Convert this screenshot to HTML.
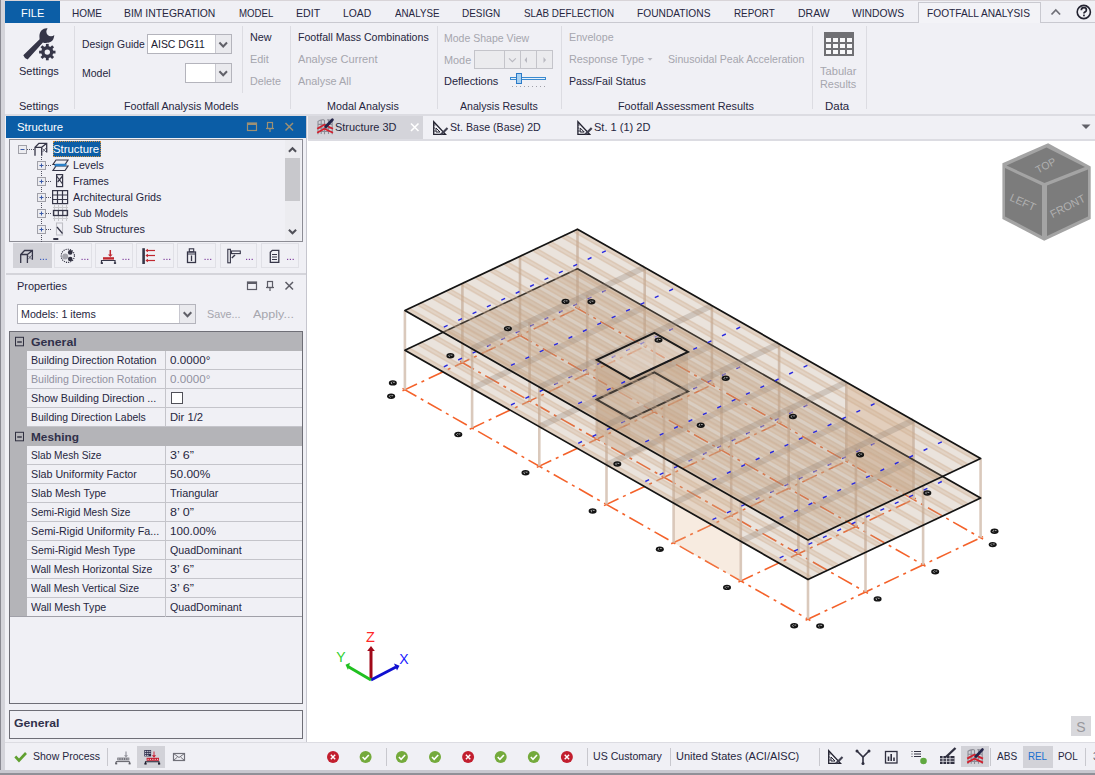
<!DOCTYPE html>
<html><head><meta charset="utf-8"><style>
html,body{margin:0;padding:0;width:1095px;height:775px;overflow:hidden;background:#f0f0f5}
.b{position:absolute}
.t{position:absolute;white-space:nowrap;font-family:"Liberation Sans", sans-serif;line-height:1;transform-origin:0 50%}
svg{position:absolute;left:0;top:0}
</style></head><body>
<div class=b style='left:0px;top:0px;width:1095px;height:775px;background:#f0f0f5'></div>
<div class=b style='left:0px;top:0px;width:1095px;height:1px;background:#d8d4d8'></div>
<div class=b style='left:0px;top:0px;width:1px;height:775px;background:#8a8a92'></div>
<div class=b style='left:1px;top:1px;width:4px;height:774px;background:#d4d4da'></div>
<div class=b style='left:0px;top:770px;width:1095px;height:5px;background:#c8c8d0'></div>
<div class=b style='left:0px;top:773px;width:1095px;height:2px;background:#909098'></div>
<div class=b style='left:5px;top:22px;width:1090px;height:1px;background:#c9c9d0'></div>
<div class=b style='left:5px;top:1px;width:55px;height:22px;background:#0c5ea6'></div>
<div class=b style='left:918px;top:2px;width:123px;height:21px;background:#f3f3f7;border:1px solid #c9c9d0;border-bottom:none;box-sizing:border-box'></div>
<div class=b style='left:74px;top:26px;width:1px;height:83px;background:#dcdce2'></div>
<div class=b style='left:242px;top:26px;width:1px;height:67px;background:#dcdce2'></div>
<div class=b style='left:290px;top:26px;width:1px;height:83px;background:#dcdce2'></div>
<div class=b style='left:437px;top:26px;width:1px;height:83px;background:#dcdce2'></div>
<div class=b style='left:561px;top:26px;width:1px;height:83px;background:#dcdce2'></div>
<div class=b style='left:812px;top:26px;width:1px;height:83px;background:#dcdce2'></div>
<div class=b style='left:866px;top:26px;width:1px;height:83px;background:#dcdce2'></div>
<div class=b style='left:5px;top:114px;width:1090px;height:2px;background:#dcdce2'></div>
<div class=b style='left:147px;top:34px;width:85px;height:20px;background:#fff;border:1px solid #b4b4bc;box-sizing:border-box'></div>
<div class=b style='left:215px;top:35px;width:15px;height:18px;background:#eaeaee;border-left:1px solid #c8c8d0'></div>
<div class=b style='left:185px;top:63px;width:47px;height:20px;background:#fff;border:1px solid #b4b4bc;box-sizing:border-box'></div>
<div class=b style='left:215px;top:64px;width:15px;height:18px;background:#eaeaee;border-left:1px solid #c8c8d0'></div>
<div class=b style='left:474px;top:50px;width:79px;height:19px;background:#ebebee;border:1px solid #c4c4ca;box-sizing:border-box'></div>
<div class=b style='left:504px;top:51px;width:1px;height:17px;background:#c4c4ca'></div>
<div class=b style='left:520px;top:51px;width:1px;height:17px;background:#c4c4ca'></div>
<div class=b style='left:536px;top:51px;width:1px;height:17px;background:#c4c4ca'></div>
<div class=b style='left:510px;top:77px;width:36px;height:3px;background:#e8f2fb;border:1px solid #3a8ad0;box-sizing:border-box'></div>
<div class=b style='left:516px;top:73px;width:6px;height:11px;background:#a8d0f0;border:1px solid #2a7ac8;box-sizing:border-box'></div>
<div class=b style='left:512px;top:86px;width:1px;height:1px;background:#a0a0a8'></div>
<div class=b style='left:516px;top:86px;width:1px;height:1px;background:#a0a0a8'></div>
<div class=b style='left:520px;top:86px;width:1px;height:1px;background:#a0a0a8'></div>
<div class=b style='left:524px;top:86px;width:1px;height:1px;background:#a0a0a8'></div>
<div class=b style='left:528px;top:86px;width:1px;height:1px;background:#a0a0a8'></div>
<div class=b style='left:532px;top:86px;width:1px;height:1px;background:#a0a0a8'></div>
<div class=b style='left:536px;top:86px;width:1px;height:1px;background:#a0a0a8'></div>
<div class=b style='left:540px;top:86px;width:1px;height:1px;background:#a0a0a8'></div>
<div class=b style='left:544px;top:86px;width:1px;height:1px;background:#a0a0a8'></div>
<div class=b style='left:824px;top:32px;width:30px;height:24px;background:#707074'></div>
<div class=b style='left:825.9px;top:37.9px;width:5.2000000000000455px;height:4.100000000000001px;background:#f8f8fa'></div>
<div class=b style='left:832.85px;top:37.9px;width:5.2000000000000455px;height:4.100000000000001px;background:#f8f8fa'></div>
<div class=b style='left:839.8px;top:37.9px;width:5.2000000000000455px;height:4.100000000000001px;background:#f8f8fa'></div>
<div class=b style='left:846.75px;top:37.9px;width:5.2000000000000455px;height:4.100000000000001px;background:#f8f8fa'></div>
<div class=b style='left:825.9px;top:43.9px;width:5.2000000000000455px;height:4.100000000000001px;background:#f8f8fa'></div>
<div class=b style='left:832.85px;top:43.9px;width:5.2000000000000455px;height:4.100000000000001px;background:#f8f8fa'></div>
<div class=b style='left:839.8px;top:43.9px;width:5.2000000000000455px;height:4.100000000000001px;background:#f8f8fa'></div>
<div class=b style='left:846.75px;top:43.9px;width:5.2000000000000455px;height:4.100000000000001px;background:#f8f8fa'></div>
<div class=b style='left:825.9px;top:49.9px;width:5.2000000000000455px;height:4.100000000000001px;background:#f8f8fa'></div>
<div class=b style='left:832.85px;top:49.9px;width:5.2000000000000455px;height:4.100000000000001px;background:#f8f8fa'></div>
<div class=b style='left:839.8px;top:49.9px;width:5.2000000000000455px;height:4.100000000000001px;background:#f8f8fa'></div>
<div class=b style='left:846.75px;top:49.9px;width:5.2000000000000455px;height:4.100000000000001px;background:#f8f8fa'></div>
<div class=b style='left:6px;top:116px;width:300px;height:22px;background:#0b5da6'></div>
<div class=b style='left:306px;top:116px;width:1px;height:626px;background:#c6c6ce'></div>
<div class=b style='left:9px;top:139px;width:294px;height:103px;background:#f0f0f5;border:1px solid #8c8c94;box-sizing:border-box'></div>
<div class=b style='left:285px;top:140px;width:16px;height:101px;background:#ececf0'></div>
<div class=b style='left:285px;top:158px;width:15px;height:43px;background:#c8c8cc'></div>
<div class=b style='left:53px;top:141px;width:48px;height:16px;background:#0c5ea6;outline:1px dotted #d09040;outline-offset:-1px'></div>
<div class=b style='left:13px;top:243px;width:39px;height:25px;background:#d2d2d8'></div>
<div class=b style='left:54px;top:243px;width:38px;height:25px;background:#f0f0f5;border:1px solid #e0e0e6;box-sizing:border-box'></div>
<div class=b style='left:95px;top:243px;width:38px;height:25px;background:#f0f0f5;border:1px solid #e0e0e6;box-sizing:border-box'></div>
<div class=b style='left:136px;top:243px;width:38px;height:25px;background:#f0f0f5;border:1px solid #e0e0e6;box-sizing:border-box'></div>
<div class=b style='left:177px;top:243px;width:39px;height:25px;background:#f0f0f5;border:1px solid #e0e0e6;box-sizing:border-box'></div>
<div class=b style='left:220px;top:243px;width:37px;height:25px;background:#f0f0f5;border:1px solid #e0e0e6;box-sizing:border-box'></div>
<div class=b style='left:261px;top:243px;width:38px;height:25px;background:#f0f0f5;border:1px solid #e0e0e6;box-sizing:border-box'></div>
<div class=b style='left:6px;top:273px;width:300px;height:2px;background:#d4d4da'></div>
<div class=b style='left:17px;top:304px;width:179px;height:20px;background:#fff;border:1px solid #b4b4bc;box-sizing:border-box'></div>
<div class=b style='left:179px;top:305px;width:15px;height:18px;background:#eaeaee;border-left:1px solid #c8c8d0'></div>
<div class=b style='left:9px;top:331px;width:294px;height:373px;background:#f0f0f5;border:1px solid #6e6e76;box-sizing:border-box'></div>
<div class=b style='left:10px;top:332px;width:292px;height:19px;background:#b4b4b8'></div>
<div class=b style='left:10px;top:427px;width:292px;height:19px;background:#b4b4b8'></div>
<div class=b style='left:10px;top:351px;width:17px;height:76px;background:#b4b4b8'></div>
<div class=b style='left:10px;top:446px;width:17px;height:171px;background:#b4b4b8'></div>
<div class=b style='left:27px;top:369px;width:275px;height:1px;background:#c4c4ca'></div>
<div class=b style='left:27px;top:388px;width:275px;height:1px;background:#c4c4ca'></div>
<div class=b style='left:27px;top:407px;width:275px;height:1px;background:#c4c4ca'></div>
<div class=b style='left:27px;top:426px;width:275px;height:1px;background:#c4c4ca'></div>
<div class=b style='left:27px;top:464px;width:275px;height:1px;background:#c4c4ca'></div>
<div class=b style='left:27px;top:483px;width:275px;height:1px;background:#c4c4ca'></div>
<div class=b style='left:27px;top:502px;width:275px;height:1px;background:#c4c4ca'></div>
<div class=b style='left:27px;top:521px;width:275px;height:1px;background:#c4c4ca'></div>
<div class=b style='left:27px;top:540px;width:275px;height:1px;background:#c4c4ca'></div>
<div class=b style='left:27px;top:559px;width:275px;height:1px;background:#c4c4ca'></div>
<div class=b style='left:27px;top:578px;width:275px;height:1px;background:#c4c4ca'></div>
<div class=b style='left:27px;top:597px;width:275px;height:1px;background:#c4c4ca'></div>
<div class=b style='left:27px;top:616px;width:275px;height:1px;background:#c4c4ca'></div>
<div class=b style='left:10px;top:616px;width:292px;height:1px;background:#a0a0a8'></div>
<div class=b style='left:165px;top:351px;width:1px;height:76px;background:#c4c4ca'></div>
<div class=b style='left:165px;top:446px;width:1px;height:171px;background:#c4c4ca'></div>
<div class=b style='left:171px;top:392px;width:12px;height:12px;background:#fff;border:1px solid #505058;box-sizing:border-box'></div>
<div class=b style='left:9px;top:710px;width:294px;height:29px;background:#f0f0f5;border:1px solid #6e6e76;box-sizing:border-box'></div>
<div class=b style='left:5px;top:742px;width:1090px;height:1px;background:#dcdce2'></div>
<div class=b style='left:308px;top:116px;width:787px;height:24px;background:#f0f0f5'></div>
<div class=b style='left:308px;top:116px;width:115px;height:24px;background:#d4d4da'></div>
<div class=b style='left:307px;top:140px;width:788px;height:602px;background:#ffffff'></div>
<div class=b style='left:308px;top:139px;width:787px;height:2px;background:#dcdce2'></div>
<div class=b style='left:1071px;top:716px;width:20px;height:20px;background:#d8d8dc'></div>
<div class=b style='left:137px;top:746px;width:28px;height:22px;background:#d2d2d8'></div>
<div class=b style='left:961px;top:746px;width:28px;height:21px;background:#d2d2d8'></div>
<div class=b style='left:1023px;top:746px;width:30px;height:22px;background:#d2d2d8'></div>
<div class=b style='left:107px;top:748px;width:1px;height:18px;background:#c8c8ce'></div>
<div class=b style='left:386px;top:748px;width:1px;height:18px;background:#c8c8ce'></div>
<div class=b style='left:587px;top:748px;width:1px;height:18px;background:#c8c8ce'></div>
<div class=b style='left:670px;top:748px;width:1px;height:18px;background:#c8c8ce'></div>
<div class=b style='left:819px;top:748px;width:1px;height:18px;background:#c8c8ce'></div>
<div class=b style='left:990px;top:748px;width:1px;height:18px;background:#c8c8ce'></div>
<div class=b style='left:1085px;top:748px;width:1px;height:18px;background:#c8c8ce'></div>
<svg width="1095" height="775" viewBox="0 0 1095 775">
<defs><clipPath id="vc"><rect x="308" y="140" width="787" height="602"/></clipPath></defs>
<g clip-path="url(#vc)">
<line x1="402.5" y1="388.4" x2="810.4" y2="620.5" style="stroke:#f4622a;stroke-width:1.6;stroke-dasharray:16 5 3 5;fill:none"/>
<line x1="460.0" y1="361.3" x2="868.0" y2="593.4" style="stroke:#f4622a;stroke-width:1.6;stroke-dasharray:16 5 3 5;fill:none"/>
<line x1="517.6" y1="334.1" x2="925.5" y2="566.2" style="stroke:#f4622a;stroke-width:1.6;stroke-dasharray:16 5 3 5;fill:none"/>
<line x1="575.1" y1="307.0" x2="983.1" y2="539.1" style="stroke:#f4622a;stroke-width:1.6;stroke-dasharray:16 5 3 5;fill:none"/>
<line x1="402.5" y1="390.9" x2="580.0" y2="307.2" style="stroke:#f4622a;stroke-width:1.6;stroke-dasharray:16 5 3 5;fill:none"/>
<line x1="469.7" y1="429.2" x2="647.2" y2="345.4" style="stroke:#f4622a;stroke-width:1.6;stroke-dasharray:16 5 3 5;fill:none"/>
<line x1="536.8" y1="467.4" x2="714.3" y2="383.7" style="stroke:#f4622a;stroke-width:1.6;stroke-dasharray:16 5 3 5;fill:none"/>
<line x1="604.0" y1="505.6" x2="781.5" y2="421.9" style="stroke:#f4622a;stroke-width:1.6;stroke-dasharray:16 5 3 5;fill:none"/>
<line x1="671.2" y1="543.8" x2="848.7" y2="460.1" style="stroke:#f4622a;stroke-width:1.6;stroke-dasharray:16 5 3 5;fill:none"/>
<line x1="738.4" y1="582.1" x2="915.9" y2="498.3" style="stroke:#f4622a;stroke-width:1.6;stroke-dasharray:16 5 3 5;fill:none"/>
<line x1="805.6" y1="620.3" x2="983.1" y2="536.6" style="stroke:#f4622a;stroke-width:1.6;stroke-dasharray:16 5 3 5;fill:none"/>
<polygon points="673.6,463.5 740.8,501.7 740.8,580.9 673.6,542.7" style="fill:rgba(228,182,145,0.28);stroke:none"/>
<polygon points="846.3,382.1 913.5,420.3 913.5,499.5 846.3,461.2" style="fill:rgba(228,182,145,0.4);stroke:none"/>
<polygon points="596.8,359.9 654.4,332.8 654.4,411.9 596.8,439.1" style="fill:rgba(200,158,122,0.22);stroke:none"/>
<polygon points="654.4,332.8 688.0,351.9 688.0,431.1 654.4,411.9" style="fill:rgba(200,158,122,0.22);stroke:none"/>
<polygon points="688.0,351.9 630.4,379.0 630.4,458.2 688.0,431.1" style="fill:rgba(200,158,122,0.22);stroke:none"/>
<polygon points="630.4,379.0 596.8,359.9 596.8,439.1 630.4,458.2" style="fill:rgba(200,158,122,0.36);stroke:none"/>
<line x1="404.9" y1="310.6" x2="404.9" y2="389.8" style="stroke:rgba(212,192,176,0.85);stroke-width:2.6"/>
<line x1="472.1" y1="348.8" x2="472.1" y2="428.0" style="stroke:rgba(212,192,176,0.85);stroke-width:2.6"/>
<line x1="539.3" y1="387.1" x2="539.3" y2="466.2" style="stroke:rgba(212,192,176,0.85);stroke-width:2.6"/>
<line x1="606.5" y1="425.3" x2="606.5" y2="504.5" style="stroke:rgba(212,192,176,0.85);stroke-width:2.6"/>
<line x1="673.6" y1="463.5" x2="673.6" y2="542.7" style="stroke:rgba(212,192,176,0.85);stroke-width:2.6"/>
<line x1="740.8" y1="501.7" x2="740.8" y2="580.9" style="stroke:rgba(212,192,176,0.85);stroke-width:2.6"/>
<line x1="808.0" y1="540.0" x2="808.0" y2="619.2" style="stroke:rgba(212,192,176,0.85);stroke-width:2.6"/>
<line x1="462.4" y1="283.5" x2="462.4" y2="362.7" style="stroke:rgba(212,192,176,0.85);stroke-width:2.6"/>
<line x1="529.6" y1="321.7" x2="529.6" y2="400.9" style="stroke:rgba(212,192,176,0.85);stroke-width:2.6"/>
<line x1="596.8" y1="359.9" x2="596.8" y2="439.1" style="stroke:rgba(212,192,176,0.85);stroke-width:2.6"/>
<line x1="664.0" y1="398.1" x2="664.0" y2="477.3" style="stroke:rgba(212,192,176,0.85);stroke-width:2.6"/>
<line x1="731.2" y1="436.4" x2="731.2" y2="515.6" style="stroke:rgba(212,192,176,0.85);stroke-width:2.6"/>
<line x1="798.4" y1="474.6" x2="798.4" y2="553.8" style="stroke:rgba(212,192,176,0.85);stroke-width:2.6"/>
<line x1="865.5" y1="512.8" x2="865.5" y2="592.0" style="stroke:rgba(212,192,176,0.85);stroke-width:2.6"/>
<line x1="520.0" y1="256.3" x2="520.0" y2="335.5" style="stroke:rgba(212,192,176,0.85);stroke-width:2.6"/>
<line x1="587.2" y1="294.5" x2="587.2" y2="373.7" style="stroke:rgba(212,192,176,0.85);stroke-width:2.6"/>
<line x1="654.4" y1="332.8" x2="654.4" y2="411.9" style="stroke:rgba(212,192,176,0.85);stroke-width:2.6"/>
<line x1="721.5" y1="371.0" x2="721.5" y2="450.2" style="stroke:rgba(212,192,176,0.85);stroke-width:2.6"/>
<line x1="788.7" y1="409.2" x2="788.7" y2="488.4" style="stroke:rgba(212,192,176,0.85);stroke-width:2.6"/>
<line x1="855.9" y1="447.4" x2="855.9" y2="526.6" style="stroke:rgba(212,192,176,0.85);stroke-width:2.6"/>
<line x1="923.1" y1="485.6" x2="923.1" y2="564.9" style="stroke:rgba(212,192,176,0.85);stroke-width:2.6"/>
<line x1="577.5" y1="229.2" x2="577.5" y2="308.4" style="stroke:rgba(212,192,176,0.85);stroke-width:2.6"/>
<line x1="644.7" y1="267.4" x2="644.7" y2="346.6" style="stroke:rgba(212,192,176,0.85);stroke-width:2.6"/>
<line x1="711.9" y1="305.6" x2="711.9" y2="384.8" style="stroke:rgba(212,192,176,0.85);stroke-width:2.6"/>
<line x1="779.1" y1="343.8" x2="779.1" y2="423.0" style="stroke:rgba(212,192,176,0.85);stroke-width:2.6"/>
<line x1="846.3" y1="382.1" x2="846.3" y2="461.2" style="stroke:rgba(212,192,176,0.85);stroke-width:2.6"/>
<line x1="913.5" y1="420.3" x2="913.5" y2="499.5" style="stroke:rgba(212,192,176,0.85);stroke-width:2.6"/>
<line x1="980.6" y1="458.5" x2="980.6" y2="537.7" style="stroke:rgba(212,192,176,0.85);stroke-width:2.6"/>
<polygon points="404.9,350.2 577.5,268.8 980.6,498.1 808.0,579.6" style="fill:rgba(178,150,126,0.27);stroke:none"/>
<line x1="407.3" y1="349.1" x2="810.4" y2="578.4" style="stroke:rgba(208,176,150,0.32);stroke-width:5.5"/>
<line x1="405.4" y1="350.0" x2="808.5" y2="579.3" style="stroke:rgba(200,160,125,0.22);stroke-width:1.2"/>
<line x1="409.2" y1="348.2" x2="812.3" y2="577.5" style="stroke:rgba(200,160,125,0.22);stroke-width:1.2"/>
<line x1="419.3" y1="343.4" x2="822.4" y2="572.8" style="stroke:rgba(208,176,150,0.32);stroke-width:5.5"/>
<line x1="417.4" y1="344.3" x2="820.5" y2="573.7" style="stroke:rgba(200,160,125,0.22);stroke-width:1.2"/>
<line x1="421.2" y1="342.5" x2="824.3" y2="571.9" style="stroke:rgba(200,160,125,0.22);stroke-width:1.2"/>
<line x1="433.7" y1="336.6" x2="836.8" y2="566.0" style="stroke:rgba(208,176,150,0.32);stroke-width:5.5"/>
<line x1="431.8" y1="337.5" x2="834.9" y2="566.9" style="stroke:rgba(200,160,125,0.22);stroke-width:1.2"/>
<line x1="435.6" y1="335.7" x2="838.7" y2="565.1" style="stroke:rgba(200,160,125,0.22);stroke-width:1.2"/>
<line x1="448.1" y1="329.8" x2="851.2" y2="559.2" style="stroke:rgba(208,176,150,0.32);stroke-width:5.5"/>
<line x1="446.2" y1="330.7" x2="849.3" y2="560.1" style="stroke:rgba(200,160,125,0.22);stroke-width:1.2"/>
<line x1="450.0" y1="328.9" x2="853.1" y2="558.3" style="stroke:rgba(200,160,125,0.22);stroke-width:1.2"/>
<line x1="462.4" y1="323.1" x2="865.5" y2="552.4" style="stroke:rgba(208,176,150,0.32);stroke-width:5.5"/>
<line x1="460.6" y1="323.9" x2="863.7" y2="553.3" style="stroke:rgba(200,160,125,0.22);stroke-width:1.2"/>
<line x1="464.3" y1="322.2" x2="867.4" y2="551.5" style="stroke:rgba(200,160,125,0.22);stroke-width:1.2"/>
<line x1="476.8" y1="316.3" x2="879.9" y2="545.6" style="stroke:rgba(208,176,150,0.32);stroke-width:5.5"/>
<line x1="474.9" y1="317.2" x2="878.0" y2="546.5" style="stroke:rgba(200,160,125,0.22);stroke-width:1.2"/>
<line x1="478.7" y1="315.4" x2="881.8" y2="544.7" style="stroke:rgba(200,160,125,0.22);stroke-width:1.2"/>
<line x1="491.2" y1="309.5" x2="894.3" y2="538.8" style="stroke:rgba(208,176,150,0.32);stroke-width:5.5"/>
<line x1="489.3" y1="310.4" x2="892.4" y2="539.7" style="stroke:rgba(200,160,125,0.22);stroke-width:1.2"/>
<line x1="493.1" y1="308.6" x2="896.2" y2="537.9" style="stroke:rgba(200,160,125,0.22);stroke-width:1.2"/>
<line x1="505.6" y1="302.7" x2="908.7" y2="532.0" style="stroke:rgba(208,176,150,0.32);stroke-width:5.5"/>
<line x1="503.7" y1="303.6" x2="906.8" y2="532.9" style="stroke:rgba(200,160,125,0.22);stroke-width:1.2"/>
<line x1="507.5" y1="301.8" x2="910.6" y2="531.1" style="stroke:rgba(200,160,125,0.22);stroke-width:1.2"/>
<line x1="520.0" y1="295.9" x2="923.1" y2="525.2" style="stroke:rgba(208,176,150,0.32);stroke-width:5.5"/>
<line x1="518.1" y1="296.8" x2="921.2" y2="526.1" style="stroke:rgba(200,160,125,0.22);stroke-width:1.2"/>
<line x1="521.9" y1="295.0" x2="925.0" y2="524.4" style="stroke:rgba(200,160,125,0.22);stroke-width:1.2"/>
<line x1="534.4" y1="289.1" x2="937.5" y2="518.5" style="stroke:rgba(208,176,150,0.32);stroke-width:5.5"/>
<line x1="532.5" y1="290.0" x2="935.6" y2="519.4" style="stroke:rgba(200,160,125,0.22);stroke-width:1.2"/>
<line x1="536.3" y1="288.2" x2="939.4" y2="517.6" style="stroke:rgba(200,160,125,0.22);stroke-width:1.2"/>
<line x1="548.8" y1="282.3" x2="951.9" y2="511.7" style="stroke:rgba(208,176,150,0.32);stroke-width:5.5"/>
<line x1="546.9" y1="283.2" x2="950.0" y2="512.6" style="stroke:rgba(200,160,125,0.22);stroke-width:1.2"/>
<line x1="550.7" y1="281.4" x2="953.8" y2="510.8" style="stroke:rgba(200,160,125,0.22);stroke-width:1.2"/>
<line x1="563.2" y1="275.5" x2="966.3" y2="504.9" style="stroke:rgba(208,176,150,0.32);stroke-width:5.5"/>
<line x1="561.3" y1="276.4" x2="964.4" y2="505.8" style="stroke:rgba(200,160,125,0.22);stroke-width:1.2"/>
<line x1="565.1" y1="274.6" x2="968.2" y2="504.0" style="stroke:rgba(200,160,125,0.22);stroke-width:1.2"/>
<line x1="575.1" y1="269.9" x2="978.2" y2="499.2" style="stroke:rgba(208,176,150,0.32);stroke-width:5.5"/>
<line x1="573.2" y1="270.8" x2="976.3" y2="500.1" style="stroke:rgba(200,160,125,0.22);stroke-width:1.2"/>
<line x1="577.0" y1="269.0" x2="980.1" y2="498.3" style="stroke:rgba(200,160,125,0.22);stroke-width:1.2"/>
<line x1="472.1" y1="388.4" x2="644.7" y2="307.0" style="stroke:rgba(148,134,120,0.32);stroke-width:6"/>
<line x1="539.3" y1="426.7" x2="711.9" y2="345.2" style="stroke:rgba(148,134,120,0.32);stroke-width:6"/>
<line x1="606.5" y1="464.9" x2="779.1" y2="383.4" style="stroke:rgba(148,134,120,0.32);stroke-width:6"/>
<line x1="673.6" y1="503.1" x2="846.3" y2="421.7" style="stroke:rgba(148,134,120,0.32);stroke-width:6"/>
<line x1="740.8" y1="541.3" x2="913.5" y2="459.9" style="stroke:rgba(148,134,120,0.32);stroke-width:6"/>
<line x1="443.8" y1="366.8" x2="447.6" y2="365.0" style="stroke:#2828e0;stroke-width:1.4"/>
<line x1="458.2" y1="360.0" x2="462.0" y2="358.2" style="stroke:#2828e0;stroke-width:1.4"/>
<line x1="472.6" y1="353.2" x2="476.4" y2="351.4" style="stroke:#2828e0;stroke-width:1.4"/>
<line x1="486.9" y1="346.5" x2="490.7" y2="344.7" style="stroke:#2828e0;stroke-width:1.4"/>
<line x1="501.3" y1="339.7" x2="505.1" y2="337.9" style="stroke:#2828e0;stroke-width:1.4"/>
<line x1="515.7" y1="332.9" x2="519.5" y2="331.1" style="stroke:#2828e0;stroke-width:1.4"/>
<line x1="530.1" y1="326.1" x2="533.9" y2="324.3" style="stroke:#2828e0;stroke-width:1.4"/>
<line x1="544.5" y1="319.3" x2="548.3" y2="317.5" style="stroke:#2828e0;stroke-width:1.4"/>
<line x1="558.9" y1="312.5" x2="562.7" y2="310.7" style="stroke:#2828e0;stroke-width:1.4"/>
<line x1="573.3" y1="305.7" x2="577.1" y2="303.9" style="stroke:#2828e0;stroke-width:1.4"/>
<line x1="587.7" y1="298.9" x2="591.5" y2="297.1" style="stroke:#2828e0;stroke-width:1.4"/>
<line x1="602.0" y1="292.2" x2="605.8" y2="290.4" style="stroke:#2828e0;stroke-width:1.4"/>
<line x1="511.0" y1="405.0" x2="514.8" y2="403.2" style="stroke:#2828e0;stroke-width:1.4"/>
<line x1="525.4" y1="398.3" x2="529.2" y2="396.5" style="stroke:#2828e0;stroke-width:1.4"/>
<line x1="539.7" y1="391.5" x2="543.5" y2="389.7" style="stroke:#2828e0;stroke-width:1.4"/>
<line x1="554.1" y1="384.7" x2="557.9" y2="382.9" style="stroke:#2828e0;stroke-width:1.4"/>
<line x1="568.5" y1="377.9" x2="572.3" y2="376.1" style="stroke:#2828e0;stroke-width:1.4"/>
<line x1="582.9" y1="371.1" x2="586.7" y2="369.3" style="stroke:#2828e0;stroke-width:1.4"/>
<line x1="597.3" y1="364.3" x2="601.1" y2="362.5" style="stroke:#2828e0;stroke-width:1.4"/>
<line x1="611.7" y1="357.5" x2="615.5" y2="355.7" style="stroke:#2828e0;stroke-width:1.4"/>
<line x1="626.1" y1="350.7" x2="629.9" y2="348.9" style="stroke:#2828e0;stroke-width:1.4"/>
<line x1="640.5" y1="344.0" x2="644.3" y2="342.2" style="stroke:#2828e0;stroke-width:1.4"/>
<line x1="654.8" y1="337.2" x2="658.6" y2="335.4" style="stroke:#2828e0;stroke-width:1.4"/>
<line x1="669.2" y1="330.4" x2="673.0" y2="328.6" style="stroke:#2828e0;stroke-width:1.4"/>
<line x1="578.2" y1="443.3" x2="582.0" y2="441.5" style="stroke:#2828e0;stroke-width:1.4"/>
<line x1="592.5" y1="436.5" x2="596.3" y2="434.7" style="stroke:#2828e0;stroke-width:1.4"/>
<line x1="606.9" y1="429.7" x2="610.7" y2="427.9" style="stroke:#2828e0;stroke-width:1.4"/>
<line x1="621.3" y1="422.9" x2="625.1" y2="421.1" style="stroke:#2828e0;stroke-width:1.4"/>
<line x1="635.7" y1="416.1" x2="639.5" y2="414.3" style="stroke:#2828e0;stroke-width:1.4"/>
<line x1="650.1" y1="409.3" x2="653.9" y2="407.5" style="stroke:#2828e0;stroke-width:1.4"/>
<line x1="664.5" y1="402.5" x2="668.3" y2="400.7" style="stroke:#2828e0;stroke-width:1.4"/>
<line x1="678.9" y1="395.8" x2="682.7" y2="394.0" style="stroke:#2828e0;stroke-width:1.4"/>
<line x1="693.3" y1="389.0" x2="697.1" y2="387.2" style="stroke:#2828e0;stroke-width:1.4"/>
<line x1="707.6" y1="382.2" x2="711.4" y2="380.4" style="stroke:#2828e0;stroke-width:1.4"/>
<line x1="722.0" y1="375.4" x2="725.8" y2="373.6" style="stroke:#2828e0;stroke-width:1.4"/>
<line x1="736.4" y1="368.6" x2="740.2" y2="366.8" style="stroke:#2828e0;stroke-width:1.4"/>
<line x1="645.3" y1="481.5" x2="649.1" y2="479.7" style="stroke:#2828e0;stroke-width:1.4"/>
<line x1="659.7" y1="474.7" x2="663.5" y2="472.9" style="stroke:#2828e0;stroke-width:1.4"/>
<line x1="674.1" y1="467.9" x2="677.9" y2="466.1" style="stroke:#2828e0;stroke-width:1.4"/>
<line x1="688.5" y1="461.1" x2="692.3" y2="459.3" style="stroke:#2828e0;stroke-width:1.4"/>
<line x1="702.9" y1="454.3" x2="706.7" y2="452.5" style="stroke:#2828e0;stroke-width:1.4"/>
<line x1="717.3" y1="447.6" x2="721.1" y2="445.8" style="stroke:#2828e0;stroke-width:1.4"/>
<line x1="731.7" y1="440.8" x2="735.5" y2="439.0" style="stroke:#2828e0;stroke-width:1.4"/>
<line x1="746.0" y1="434.0" x2="749.8" y2="432.2" style="stroke:#2828e0;stroke-width:1.4"/>
<line x1="760.4" y1="427.2" x2="764.2" y2="425.4" style="stroke:#2828e0;stroke-width:1.4"/>
<line x1="774.8" y1="420.4" x2="778.6" y2="418.6" style="stroke:#2828e0;stroke-width:1.4"/>
<line x1="789.2" y1="413.6" x2="793.0" y2="411.8" style="stroke:#2828e0;stroke-width:1.4"/>
<line x1="803.6" y1="406.8" x2="807.4" y2="405.0" style="stroke:#2828e0;stroke-width:1.4"/>
<line x1="712.5" y1="519.7" x2="716.3" y2="517.9" style="stroke:#2828e0;stroke-width:1.4"/>
<line x1="726.9" y1="512.9" x2="730.7" y2="511.1" style="stroke:#2828e0;stroke-width:1.4"/>
<line x1="741.3" y1="506.1" x2="745.1" y2="504.3" style="stroke:#2828e0;stroke-width:1.4"/>
<line x1="755.7" y1="499.4" x2="759.5" y2="497.6" style="stroke:#2828e0;stroke-width:1.4"/>
<line x1="770.1" y1="492.6" x2="773.9" y2="490.8" style="stroke:#2828e0;stroke-width:1.4"/>
<line x1="784.5" y1="485.8" x2="788.3" y2="484.0" style="stroke:#2828e0;stroke-width:1.4"/>
<line x1="798.8" y1="479.0" x2="802.6" y2="477.2" style="stroke:#2828e0;stroke-width:1.4"/>
<line x1="813.2" y1="472.2" x2="817.0" y2="470.4" style="stroke:#2828e0;stroke-width:1.4"/>
<line x1="827.6" y1="465.4" x2="831.4" y2="463.6" style="stroke:#2828e0;stroke-width:1.4"/>
<line x1="842.0" y1="458.6" x2="845.8" y2="456.8" style="stroke:#2828e0;stroke-width:1.4"/>
<line x1="856.4" y1="451.8" x2="860.2" y2="450.0" style="stroke:#2828e0;stroke-width:1.4"/>
<line x1="870.8" y1="445.1" x2="874.6" y2="443.3" style="stroke:#2828e0;stroke-width:1.4"/>
<line x1="779.7" y1="557.9" x2="783.5" y2="556.1" style="stroke:#2828e0;stroke-width:1.4"/>
<line x1="794.1" y1="551.2" x2="797.9" y2="549.4" style="stroke:#2828e0;stroke-width:1.4"/>
<line x1="808.5" y1="544.4" x2="812.3" y2="542.6" style="stroke:#2828e0;stroke-width:1.4"/>
<line x1="822.9" y1="537.6" x2="826.7" y2="535.8" style="stroke:#2828e0;stroke-width:1.4"/>
<line x1="837.3" y1="530.8" x2="841.1" y2="529.0" style="stroke:#2828e0;stroke-width:1.4"/>
<line x1="851.6" y1="524.0" x2="855.4" y2="522.2" style="stroke:#2828e0;stroke-width:1.4"/>
<line x1="866.0" y1="517.2" x2="869.8" y2="515.4" style="stroke:#2828e0;stroke-width:1.4"/>
<line x1="880.4" y1="510.4" x2="884.2" y2="508.6" style="stroke:#2828e0;stroke-width:1.4"/>
<line x1="894.8" y1="503.6" x2="898.6" y2="501.8" style="stroke:#2828e0;stroke-width:1.4"/>
<line x1="909.2" y1="496.9" x2="913.0" y2="495.1" style="stroke:#2828e0;stroke-width:1.4"/>
<line x1="923.6" y1="490.1" x2="927.4" y2="488.3" style="stroke:#2828e0;stroke-width:1.4"/>
<line x1="938.0" y1="483.3" x2="941.8" y2="481.5" style="stroke:#2828e0;stroke-width:1.4"/>
<polygon points="596.8,399.5 654.4,372.4 688.0,391.5 630.4,418.6" style="fill:rgba(255,255,255,0.25);stroke:#1a1a1a;stroke-width:2"/>
<polygon points="404.9,350.2 577.5,268.8 980.6,498.1 808.0,579.6" style="fill:none;stroke:#141414;stroke-width:1.7;stroke-linejoin:round"/>
<polygon points="404.9,310.6 577.5,229.2 980.6,458.5 808.0,540.0" style="fill:rgba(178,150,126,0.27);stroke:none"/>
<line x1="407.3" y1="309.5" x2="810.4" y2="538.8" style="stroke:rgba(208,176,150,0.32);stroke-width:5.5"/>
<line x1="405.4" y1="310.4" x2="808.5" y2="539.7" style="stroke:rgba(200,160,125,0.22);stroke-width:1.2"/>
<line x1="409.2" y1="308.6" x2="812.3" y2="537.9" style="stroke:rgba(200,160,125,0.22);stroke-width:1.2"/>
<line x1="419.3" y1="303.8" x2="822.4" y2="533.2" style="stroke:rgba(208,176,150,0.32);stroke-width:5.5"/>
<line x1="417.4" y1="304.7" x2="820.5" y2="534.1" style="stroke:rgba(200,160,125,0.22);stroke-width:1.2"/>
<line x1="421.2" y1="302.9" x2="824.3" y2="532.3" style="stroke:rgba(200,160,125,0.22);stroke-width:1.2"/>
<line x1="433.7" y1="297.0" x2="836.8" y2="526.4" style="stroke:rgba(208,176,150,0.32);stroke-width:5.5"/>
<line x1="431.8" y1="297.9" x2="834.9" y2="527.3" style="stroke:rgba(200,160,125,0.22);stroke-width:1.2"/>
<line x1="435.6" y1="296.1" x2="838.7" y2="525.5" style="stroke:rgba(200,160,125,0.22);stroke-width:1.2"/>
<line x1="448.1" y1="290.2" x2="851.2" y2="519.6" style="stroke:rgba(208,176,150,0.32);stroke-width:5.5"/>
<line x1="446.2" y1="291.1" x2="849.3" y2="520.5" style="stroke:rgba(200,160,125,0.22);stroke-width:1.2"/>
<line x1="450.0" y1="289.3" x2="853.1" y2="518.7" style="stroke:rgba(200,160,125,0.22);stroke-width:1.2"/>
<line x1="462.4" y1="283.5" x2="865.5" y2="512.8" style="stroke:rgba(208,176,150,0.32);stroke-width:5.5"/>
<line x1="460.6" y1="284.3" x2="863.7" y2="513.7" style="stroke:rgba(200,160,125,0.22);stroke-width:1.2"/>
<line x1="464.3" y1="282.6" x2="867.4" y2="511.9" style="stroke:rgba(200,160,125,0.22);stroke-width:1.2"/>
<line x1="476.8" y1="276.7" x2="879.9" y2="506.0" style="stroke:rgba(208,176,150,0.32);stroke-width:5.5"/>
<line x1="474.9" y1="277.6" x2="878.0" y2="506.9" style="stroke:rgba(200,160,125,0.22);stroke-width:1.2"/>
<line x1="478.7" y1="275.8" x2="881.8" y2="505.1" style="stroke:rgba(200,160,125,0.22);stroke-width:1.2"/>
<line x1="491.2" y1="269.9" x2="894.3" y2="499.2" style="stroke:rgba(208,176,150,0.32);stroke-width:5.5"/>
<line x1="489.3" y1="270.8" x2="892.4" y2="500.1" style="stroke:rgba(200,160,125,0.22);stroke-width:1.2"/>
<line x1="493.1" y1="269.0" x2="896.2" y2="498.3" style="stroke:rgba(200,160,125,0.22);stroke-width:1.2"/>
<line x1="505.6" y1="263.1" x2="908.7" y2="492.4" style="stroke:rgba(208,176,150,0.32);stroke-width:5.5"/>
<line x1="503.7" y1="264.0" x2="906.8" y2="493.3" style="stroke:rgba(200,160,125,0.22);stroke-width:1.2"/>
<line x1="507.5" y1="262.2" x2="910.6" y2="491.5" style="stroke:rgba(200,160,125,0.22);stroke-width:1.2"/>
<line x1="520.0" y1="256.3" x2="923.1" y2="485.6" style="stroke:rgba(208,176,150,0.32);stroke-width:5.5"/>
<line x1="518.1" y1="257.2" x2="921.2" y2="486.5" style="stroke:rgba(200,160,125,0.22);stroke-width:1.2"/>
<line x1="521.9" y1="255.4" x2="925.0" y2="484.8" style="stroke:rgba(200,160,125,0.22);stroke-width:1.2"/>
<line x1="534.4" y1="249.5" x2="937.5" y2="478.9" style="stroke:rgba(208,176,150,0.32);stroke-width:5.5"/>
<line x1="532.5" y1="250.4" x2="935.6" y2="479.8" style="stroke:rgba(200,160,125,0.22);stroke-width:1.2"/>
<line x1="536.3" y1="248.6" x2="939.4" y2="478.0" style="stroke:rgba(200,160,125,0.22);stroke-width:1.2"/>
<line x1="548.8" y1="242.7" x2="951.9" y2="472.1" style="stroke:rgba(208,176,150,0.32);stroke-width:5.5"/>
<line x1="546.9" y1="243.6" x2="950.0" y2="473.0" style="stroke:rgba(200,160,125,0.22);stroke-width:1.2"/>
<line x1="550.7" y1="241.8" x2="953.8" y2="471.2" style="stroke:rgba(200,160,125,0.22);stroke-width:1.2"/>
<line x1="563.2" y1="235.9" x2="966.3" y2="465.3" style="stroke:rgba(208,176,150,0.32);stroke-width:5.5"/>
<line x1="561.3" y1="236.8" x2="964.4" y2="466.2" style="stroke:rgba(200,160,125,0.22);stroke-width:1.2"/>
<line x1="565.1" y1="235.0" x2="968.2" y2="464.4" style="stroke:rgba(200,160,125,0.22);stroke-width:1.2"/>
<line x1="575.1" y1="230.3" x2="978.2" y2="459.6" style="stroke:rgba(208,176,150,0.32);stroke-width:5.5"/>
<line x1="573.2" y1="231.2" x2="976.3" y2="460.5" style="stroke:rgba(200,160,125,0.22);stroke-width:1.2"/>
<line x1="577.0" y1="229.4" x2="980.1" y2="458.7" style="stroke:rgba(200,160,125,0.22);stroke-width:1.2"/>
<line x1="472.1" y1="348.8" x2="644.7" y2="267.4" style="stroke:rgba(148,134,120,0.32);stroke-width:6"/>
<line x1="539.3" y1="387.1" x2="711.9" y2="305.6" style="stroke:rgba(148,134,120,0.32);stroke-width:6"/>
<line x1="606.5" y1="425.3" x2="779.1" y2="343.8" style="stroke:rgba(148,134,120,0.32);stroke-width:6"/>
<line x1="673.6" y1="463.5" x2="846.3" y2="382.1" style="stroke:rgba(148,134,120,0.32);stroke-width:6"/>
<line x1="740.8" y1="501.7" x2="913.5" y2="420.3" style="stroke:rgba(148,134,120,0.32);stroke-width:6"/>
<line x1="443.8" y1="327.2" x2="447.6" y2="325.4" style="stroke:#2828e0;stroke-width:1.4"/>
<line x1="458.2" y1="320.4" x2="462.0" y2="318.6" style="stroke:#2828e0;stroke-width:1.4"/>
<line x1="472.6" y1="313.6" x2="476.4" y2="311.8" style="stroke:#2828e0;stroke-width:1.4"/>
<line x1="486.9" y1="306.9" x2="490.7" y2="305.1" style="stroke:#2828e0;stroke-width:1.4"/>
<line x1="501.3" y1="300.1" x2="505.1" y2="298.3" style="stroke:#2828e0;stroke-width:1.4"/>
<line x1="515.7" y1="293.3" x2="519.5" y2="291.5" style="stroke:#2828e0;stroke-width:1.4"/>
<line x1="530.1" y1="286.5" x2="533.9" y2="284.7" style="stroke:#2828e0;stroke-width:1.4"/>
<line x1="544.5" y1="279.7" x2="548.3" y2="277.9" style="stroke:#2828e0;stroke-width:1.4"/>
<line x1="558.9" y1="272.9" x2="562.7" y2="271.1" style="stroke:#2828e0;stroke-width:1.4"/>
<line x1="573.3" y1="266.1" x2="577.1" y2="264.3" style="stroke:#2828e0;stroke-width:1.4"/>
<line x1="587.7" y1="259.3" x2="591.5" y2="257.5" style="stroke:#2828e0;stroke-width:1.4"/>
<line x1="602.0" y1="252.6" x2="605.8" y2="250.8" style="stroke:#2828e0;stroke-width:1.4"/>
<line x1="511.0" y1="365.4" x2="514.8" y2="363.6" style="stroke:#2828e0;stroke-width:1.4"/>
<line x1="525.4" y1="358.7" x2="529.2" y2="356.9" style="stroke:#2828e0;stroke-width:1.4"/>
<line x1="539.7" y1="351.9" x2="543.5" y2="350.1" style="stroke:#2828e0;stroke-width:1.4"/>
<line x1="554.1" y1="345.1" x2="557.9" y2="343.3" style="stroke:#2828e0;stroke-width:1.4"/>
<line x1="568.5" y1="338.3" x2="572.3" y2="336.5" style="stroke:#2828e0;stroke-width:1.4"/>
<line x1="582.9" y1="331.5" x2="586.7" y2="329.7" style="stroke:#2828e0;stroke-width:1.4"/>
<line x1="597.3" y1="324.7" x2="601.1" y2="322.9" style="stroke:#2828e0;stroke-width:1.4"/>
<line x1="611.7" y1="317.9" x2="615.5" y2="316.1" style="stroke:#2828e0;stroke-width:1.4"/>
<line x1="626.1" y1="311.1" x2="629.9" y2="309.3" style="stroke:#2828e0;stroke-width:1.4"/>
<line x1="640.5" y1="304.4" x2="644.3" y2="302.6" style="stroke:#2828e0;stroke-width:1.4"/>
<line x1="654.8" y1="297.6" x2="658.6" y2="295.8" style="stroke:#2828e0;stroke-width:1.4"/>
<line x1="669.2" y1="290.8" x2="673.0" y2="289.0" style="stroke:#2828e0;stroke-width:1.4"/>
<line x1="578.2" y1="403.7" x2="582.0" y2="401.9" style="stroke:#2828e0;stroke-width:1.4"/>
<line x1="592.5" y1="396.9" x2="596.3" y2="395.1" style="stroke:#2828e0;stroke-width:1.4"/>
<line x1="606.9" y1="390.1" x2="610.7" y2="388.3" style="stroke:#2828e0;stroke-width:1.4"/>
<line x1="621.3" y1="383.3" x2="625.1" y2="381.5" style="stroke:#2828e0;stroke-width:1.4"/>
<line x1="635.7" y1="376.5" x2="639.5" y2="374.7" style="stroke:#2828e0;stroke-width:1.4"/>
<line x1="650.1" y1="369.7" x2="653.9" y2="367.9" style="stroke:#2828e0;stroke-width:1.4"/>
<line x1="664.5" y1="362.9" x2="668.3" y2="361.1" style="stroke:#2828e0;stroke-width:1.4"/>
<line x1="678.9" y1="356.2" x2="682.7" y2="354.4" style="stroke:#2828e0;stroke-width:1.4"/>
<line x1="693.3" y1="349.4" x2="697.1" y2="347.6" style="stroke:#2828e0;stroke-width:1.4"/>
<line x1="707.6" y1="342.6" x2="711.4" y2="340.8" style="stroke:#2828e0;stroke-width:1.4"/>
<line x1="722.0" y1="335.8" x2="725.8" y2="334.0" style="stroke:#2828e0;stroke-width:1.4"/>
<line x1="736.4" y1="329.0" x2="740.2" y2="327.2" style="stroke:#2828e0;stroke-width:1.4"/>
<line x1="645.3" y1="441.9" x2="649.1" y2="440.1" style="stroke:#2828e0;stroke-width:1.4"/>
<line x1="659.7" y1="435.1" x2="663.5" y2="433.3" style="stroke:#2828e0;stroke-width:1.4"/>
<line x1="674.1" y1="428.3" x2="677.9" y2="426.5" style="stroke:#2828e0;stroke-width:1.4"/>
<line x1="688.5" y1="421.5" x2="692.3" y2="419.7" style="stroke:#2828e0;stroke-width:1.4"/>
<line x1="702.9" y1="414.7" x2="706.7" y2="412.9" style="stroke:#2828e0;stroke-width:1.4"/>
<line x1="717.3" y1="408.0" x2="721.1" y2="406.2" style="stroke:#2828e0;stroke-width:1.4"/>
<line x1="731.7" y1="401.2" x2="735.5" y2="399.4" style="stroke:#2828e0;stroke-width:1.4"/>
<line x1="746.0" y1="394.4" x2="749.8" y2="392.6" style="stroke:#2828e0;stroke-width:1.4"/>
<line x1="760.4" y1="387.6" x2="764.2" y2="385.8" style="stroke:#2828e0;stroke-width:1.4"/>
<line x1="774.8" y1="380.8" x2="778.6" y2="379.0" style="stroke:#2828e0;stroke-width:1.4"/>
<line x1="789.2" y1="374.0" x2="793.0" y2="372.2" style="stroke:#2828e0;stroke-width:1.4"/>
<line x1="803.6" y1="367.2" x2="807.4" y2="365.4" style="stroke:#2828e0;stroke-width:1.4"/>
<line x1="712.5" y1="480.1" x2="716.3" y2="478.3" style="stroke:#2828e0;stroke-width:1.4"/>
<line x1="726.9" y1="473.3" x2="730.7" y2="471.5" style="stroke:#2828e0;stroke-width:1.4"/>
<line x1="741.3" y1="466.5" x2="745.1" y2="464.7" style="stroke:#2828e0;stroke-width:1.4"/>
<line x1="755.7" y1="459.8" x2="759.5" y2="458.0" style="stroke:#2828e0;stroke-width:1.4"/>
<line x1="770.1" y1="453.0" x2="773.9" y2="451.2" style="stroke:#2828e0;stroke-width:1.4"/>
<line x1="784.5" y1="446.2" x2="788.3" y2="444.4" style="stroke:#2828e0;stroke-width:1.4"/>
<line x1="798.8" y1="439.4" x2="802.6" y2="437.6" style="stroke:#2828e0;stroke-width:1.4"/>
<line x1="813.2" y1="432.6" x2="817.0" y2="430.8" style="stroke:#2828e0;stroke-width:1.4"/>
<line x1="827.6" y1="425.8" x2="831.4" y2="424.0" style="stroke:#2828e0;stroke-width:1.4"/>
<line x1="842.0" y1="419.0" x2="845.8" y2="417.2" style="stroke:#2828e0;stroke-width:1.4"/>
<line x1="856.4" y1="412.2" x2="860.2" y2="410.4" style="stroke:#2828e0;stroke-width:1.4"/>
<line x1="870.8" y1="405.5" x2="874.6" y2="403.7" style="stroke:#2828e0;stroke-width:1.4"/>
<line x1="779.7" y1="518.3" x2="783.5" y2="516.5" style="stroke:#2828e0;stroke-width:1.4"/>
<line x1="794.1" y1="511.6" x2="797.9" y2="509.8" style="stroke:#2828e0;stroke-width:1.4"/>
<line x1="808.5" y1="504.8" x2="812.3" y2="503.0" style="stroke:#2828e0;stroke-width:1.4"/>
<line x1="822.9" y1="498.0" x2="826.7" y2="496.2" style="stroke:#2828e0;stroke-width:1.4"/>
<line x1="837.3" y1="491.2" x2="841.1" y2="489.4" style="stroke:#2828e0;stroke-width:1.4"/>
<line x1="851.6" y1="484.4" x2="855.4" y2="482.6" style="stroke:#2828e0;stroke-width:1.4"/>
<line x1="866.0" y1="477.6" x2="869.8" y2="475.8" style="stroke:#2828e0;stroke-width:1.4"/>
<line x1="880.4" y1="470.8" x2="884.2" y2="469.0" style="stroke:#2828e0;stroke-width:1.4"/>
<line x1="894.8" y1="464.0" x2="898.6" y2="462.2" style="stroke:#2828e0;stroke-width:1.4"/>
<line x1="909.2" y1="457.3" x2="913.0" y2="455.5" style="stroke:#2828e0;stroke-width:1.4"/>
<line x1="923.6" y1="450.5" x2="927.4" y2="448.7" style="stroke:#2828e0;stroke-width:1.4"/>
<line x1="938.0" y1="443.7" x2="941.8" y2="441.9" style="stroke:#2828e0;stroke-width:1.4"/>
<polygon points="596.8,359.9 654.4,332.8 688.0,351.9 630.4,379.0" style="fill:rgba(255,255,255,0.25);stroke:#1a1a1a;stroke-width:2"/>
<polygon points="404.9,310.6 577.5,229.2 980.6,458.5 808.0,540.0" style="fill:none;stroke:#141414;stroke-width:1.7;stroke-linejoin:round"/>
<ellipse cx="392.8" cy="382.9" rx="4.0" ry="2.7" style="fill:#141414;stroke:none"/>
<path d="M391.0,382.9 L392.2,381.7 M391.0,382.9 L392.2,384.1 M393.0,382.3 H394.8" style="fill:none;stroke:#e8e8e8;stroke-width:0.7"/>
<ellipse cx="820.1" cy="626.0" rx="4.0" ry="2.7" style="fill:#141414;stroke:none"/>
<path d="M818.3,626.0 L819.5,624.8 M818.3,626.0 L819.5,627.2 M820.3,625.4 H822.1" style="fill:none;stroke:#e8e8e8;stroke-width:0.7"/>
<ellipse cx="450.4" cy="355.8" rx="4.0" ry="2.7" style="fill:#141414;stroke:none"/>
<path d="M448.6,355.8 L449.8,354.6 M448.6,355.8 L449.8,357.0 M450.6,355.2 H452.4" style="fill:none;stroke:#e8e8e8;stroke-width:0.7"/>
<ellipse cx="877.6" cy="598.9" rx="4.0" ry="2.7" style="fill:#141414;stroke:none"/>
<path d="M875.8,598.9 L877.0,597.7 M875.8,598.9 L877.0,600.1 M877.8,598.3 H879.6" style="fill:none;stroke:#e8e8e8;stroke-width:0.7"/>
<ellipse cx="507.9" cy="328.6" rx="4.0" ry="2.7" style="fill:#141414;stroke:none"/>
<path d="M506.1,328.6 L507.3,327.4 M506.1,328.6 L507.3,329.8 M508.1,328.0 H509.9" style="fill:none;stroke:#e8e8e8;stroke-width:0.7"/>
<ellipse cx="935.2" cy="571.7" rx="4.0" ry="2.7" style="fill:#141414;stroke:none"/>
<path d="M933.4,571.7 L934.6,570.5 M933.4,571.7 L934.6,572.9 M935.4,571.1 H937.2" style="fill:none;stroke:#e8e8e8;stroke-width:0.7"/>
<ellipse cx="565.5" cy="301.5" rx="4.0" ry="2.7" style="fill:#141414;stroke:none"/>
<path d="M563.7,301.5 L564.9,300.3 M563.7,301.5 L564.9,302.7 M565.7,300.9 H567.5" style="fill:none;stroke:#e8e8e8;stroke-width:0.7"/>
<ellipse cx="992.7" cy="544.6" rx="4.0" ry="2.7" style="fill:#141414;stroke:none"/>
<path d="M990.9,544.6 L992.1,543.4 M990.9,544.6 L992.1,545.8 M992.9,544.0 H994.7" style="fill:none;stroke:#e8e8e8;stroke-width:0.7"/>
<ellipse cx="391.1" cy="396.3" rx="4.0" ry="2.7" style="fill:#141414;stroke:none"/>
<path d="M389.3,396.3 L390.5,395.1 M389.3,396.3 L390.5,397.5 M391.3,395.7 H393.1" style="fill:none;stroke:#e8e8e8;stroke-width:0.7"/>
<ellipse cx="591.4" cy="301.8" rx="4.0" ry="2.7" style="fill:#141414;stroke:none"/>
<path d="M589.6,301.8 L590.8,300.6 M589.6,301.8 L590.8,303.0 M591.6,301.2 H593.4" style="fill:none;stroke:#e8e8e8;stroke-width:0.7"/>
<ellipse cx="458.3" cy="434.5" rx="4.0" ry="2.7" style="fill:#141414;stroke:none"/>
<path d="M456.5,434.5 L457.7,433.3 M456.5,434.5 L457.7,435.7 M458.5,433.9 H460.3" style="fill:none;stroke:#e8e8e8;stroke-width:0.7"/>
<ellipse cx="658.5" cy="340.1" rx="4.0" ry="2.7" style="fill:#141414;stroke:none"/>
<path d="M656.7,340.1 L657.9,338.9 M656.7,340.1 L657.9,341.3 M658.7,339.5 H660.5" style="fill:none;stroke:#e8e8e8;stroke-width:0.7"/>
<ellipse cx="525.5" cy="472.8" rx="4.0" ry="2.7" style="fill:#141414;stroke:none"/>
<path d="M523.7,472.8 L524.9,471.6 M523.7,472.8 L524.9,474.0 M525.7,472.2 H527.5" style="fill:none;stroke:#e8e8e8;stroke-width:0.7"/>
<ellipse cx="725.7" cy="378.3" rx="4.0" ry="2.7" style="fill:#141414;stroke:none"/>
<path d="M723.9,378.3 L725.1,377.1 M723.9,378.3 L725.1,379.5 M725.9,377.7 H727.7" style="fill:none;stroke:#e8e8e8;stroke-width:0.7"/>
<ellipse cx="592.6" cy="511.0" rx="4.0" ry="2.7" style="fill:#141414;stroke:none"/>
<path d="M590.8,511.0 L592.0,509.8 M590.8,511.0 L592.0,512.2 M592.8,510.4 H594.6" style="fill:none;stroke:#e8e8e8;stroke-width:0.7"/>
<ellipse cx="792.9" cy="416.5" rx="4.0" ry="2.7" style="fill:#141414;stroke:none"/>
<path d="M791.1,416.5 L792.3,415.3 M791.1,416.5 L792.3,417.7 M793.1,415.9 H794.9" style="fill:none;stroke:#e8e8e8;stroke-width:0.7"/>
<ellipse cx="659.8" cy="549.2" rx="4.0" ry="2.7" style="fill:#141414;stroke:none"/>
<path d="M658.0,549.2 L659.2,548.0 M658.0,549.2 L659.2,550.4 M660.0,548.6 H661.8" style="fill:none;stroke:#e8e8e8;stroke-width:0.7"/>
<ellipse cx="860.1" cy="454.7" rx="4.0" ry="2.7" style="fill:#141414;stroke:none"/>
<path d="M858.3,454.7 L859.5,453.5 M858.3,454.7 L859.5,455.9 M860.3,454.1 H862.1" style="fill:none;stroke:#e8e8e8;stroke-width:0.7"/>
<ellipse cx="727.0" cy="587.4" rx="4.0" ry="2.7" style="fill:#141414;stroke:none"/>
<path d="M725.2,587.4 L726.4,586.2 M725.2,587.4 L726.4,588.6 M727.2,586.8 H729.0" style="fill:none;stroke:#e8e8e8;stroke-width:0.7"/>
<ellipse cx="927.3" cy="493.0" rx="4.0" ry="2.7" style="fill:#141414;stroke:none"/>
<path d="M925.5,493.0 L926.7,491.8 M925.5,493.0 L926.7,494.2 M927.5,492.4 H929.3" style="fill:none;stroke:#e8e8e8;stroke-width:0.7"/>
<ellipse cx="794.2" cy="625.7" rx="4.0" ry="2.7" style="fill:#141414;stroke:none"/>
<path d="M792.4,625.7 L793.6,624.5 M792.4,625.7 L793.6,626.9 M794.4,625.1 H796.2" style="fill:none;stroke:#e8e8e8;stroke-width:0.7"/>
<ellipse cx="994.5" cy="531.2" rx="4.0" ry="2.7" style="fill:#141414;stroke:none"/>
<path d="M992.7,531.2 L993.9,530.0 M992.7,531.2 L993.9,532.4 M994.7,530.6 H996.5" style="fill:none;stroke:#e8e8e8;stroke-width:0.7"/>
<ellipse cx="700.7" cy="425.2" rx="4.0" ry="2.7" style="fill:#141414;stroke:none"/>
<path d="M698.9,425.2 L700.1,424.0 M698.9,425.2 L700.1,426.4 M700.9,424.6 H702.7" style="fill:none;stroke:#e8e8e8;stroke-width:0.7"/>
<ellipse cx="617.3" cy="464.0" rx="4.0" ry="2.7" style="fill:#141414;stroke:none"/>
<path d="M615.5,464.0 L616.7,462.8 M615.5,464.0 L616.7,465.2 M617.5,463.4 H619.3" style="fill:none;stroke:#e8e8e8;stroke-width:0.7"/>
</g></svg>
<svg width="1095" height="775" viewBox="0 0 1095 775" style="position:absolute;left:0;top:0">
<path d="M23.3,55.2 L39.6,39.2 Q38.6,33.5 41.6,30.3 Q44.2,27.9 47.66,28.43 A4.6,4.6 0 1 0 54.3,34.9 Q54,39.8 50.8,41.8 Q46.8,43.8 42.9,42.5 L27.6,59.6 Q24.6,58.6 23.3,55.2 Z" fill="#363648"/>
<circle cx="47.3" cy="52.1" r="9.4" fill="#f0f0f5"/>
<rect x="45.9" y="43.9" width="2.8" height="3.2" fill="#363648" transform="rotate(0 47.3 52.1)"/><rect x="45.9" y="43.9" width="2.8" height="3.2" fill="#363648" transform="rotate(45 47.3 52.1)"/><rect x="45.9" y="43.9" width="2.8" height="3.2" fill="#363648" transform="rotate(90 47.3 52.1)"/><rect x="45.9" y="43.9" width="2.8" height="3.2" fill="#363648" transform="rotate(135 47.3 52.1)"/><rect x="45.9" y="43.9" width="2.8" height="3.2" fill="#363648" transform="rotate(180 47.3 52.1)"/><rect x="45.9" y="43.9" width="2.8" height="3.2" fill="#363648" transform="rotate(225 47.3 52.1)"/><rect x="45.9" y="43.9" width="2.8" height="3.2" fill="#363648" transform="rotate(270 47.3 52.1)"/><rect x="45.9" y="43.9" width="2.8" height="3.2" fill="#363648" transform="rotate(315 47.3 52.1)"/>
<circle cx="47.3" cy="52.1" r="6.1" fill="#363648"/>
<circle cx="47.3" cy="52.1" r="2.7" fill="#f0f0f5"/>
<polyline points="219.4,42.5 223.2,46.5 227.0,42.5" fill="none" stroke="#606068" stroke-width="2"/>
<polyline points="219.4,71.3 223.2,75.3 227.0,71.3" fill="none" stroke="#606068" stroke-width="2"/>
<polyline points="509.0,58.4 512.4,61.6 515.8,58.4" fill="none" stroke="#b8b8c0" stroke-width="1.2"/>
<polygon points="527,57 527,63 524.5,60" fill="#b8b8c0"/>
<polygon points="543.5,57 543.5,63 546,60" fill="#b8b8c0"/>
<polygon points="647.5,58 652.5,58 650,60.8" fill="#b8b8c0"/>
<polyline points="183.7,312.3 187.5,316.3 191.3,312.3" fill="none" stroke="#606068" stroke-width="2"/>
<polyline points="1051.5,14.5 1055.8,10 1060.1,14.5" fill="none" stroke="#707078" stroke-width="1.8"/>
<circle cx="1083.8" cy="12" r="6.6" fill="none" stroke="#222230" stroke-width="1.6"/>
<path d="M1081.3,10.2 Q1081.3,7.6 1083.9,7.6 Q1086.4,7.6 1086.4,9.9 Q1086.4,11.4 1084.8,12.1 Q1083.9,12.5 1083.9,13.6" fill="none" stroke="#222230" stroke-width="1.7"/>
<rect x="1083.1" y="14.6" width="1.7" height="1.7" fill="#222230"/>
<rect x="247.5" y="123" width="9" height="7.5" fill="none" stroke="#9d9074" stroke-width="1.2"/><rect x="247.5" y="123" width="9" height="2" fill="#9d9074"/><rect x="267.5" y="122.5" width="5" height="6" fill="none" stroke="#9d9074" stroke-width="1.2"/><line x1="266" y1="128.5" x2="274" y2="128.5" stroke="#9d9074" stroke-width="1.2"/><line x1="270" y1="128.5" x2="270" y2="132" stroke="#9d9074" stroke-width="1.2"/><path d="M285.5,123 L293,130.5 M293,123 L285.5,130.5" stroke="#9d9074" stroke-width="1.5"/>
<rect x="247.5" y="282" width="9" height="7.5" fill="none" stroke="#5c5c66" stroke-width="1.2"/><rect x="247.5" y="282" width="9" height="2" fill="#5c5c66"/><rect x="267.5" y="281.5" width="5" height="6" fill="none" stroke="#5c5c66" stroke-width="1.2"/><line x1="266" y1="287.5" x2="274" y2="287.5" stroke="#5c5c66" stroke-width="1.2"/><line x1="270" y1="287.5" x2="270" y2="291" stroke="#5c5c66" stroke-width="1.2"/><path d="M285.5,282 L293,289.5 M293,282 L285.5,289.5" stroke="#5c5c66" stroke-width="1.5"/>
<rect x="18.5" y="145.5" width="8" height="8" fill="#ececf0" stroke="#a0a0a8" stroke-width="1"/><line x1="20.5" y1="149.5" x2="24.5" y2="149.5" stroke="#3a5aa8" stroke-width="1"/>
<line x1="27" y1="149.5" x2="34" y2="149.5" stroke="#505060" stroke-width="1" stroke-dasharray="1 1"/>
<line x1="41.5" y1="157" x2="41.5" y2="243" stroke="#505060" stroke-width="1" stroke-dasharray="1 1"/>
<rect x="37.5" y="161.5" width="8" height="8" fill="#ececf0" stroke="#a0a0a8" stroke-width="1"/><line x1="39.5" y1="165.5" x2="43.5" y2="165.5" stroke="#3a5aa8" stroke-width="1"/><line x1="41.5" y1="163.5" x2="41.5" y2="167.5" stroke="#3a5aa8" stroke-width="1"/>
<line x1="46" y1="165.5" x2="52" y2="165.5" stroke="#505060" stroke-width="1" stroke-dasharray="1 1"/>
<rect x="37.5" y="177.5" width="8" height="8" fill="#ececf0" stroke="#a0a0a8" stroke-width="1"/><line x1="39.5" y1="181.5" x2="43.5" y2="181.5" stroke="#3a5aa8" stroke-width="1"/><line x1="41.5" y1="179.5" x2="41.5" y2="183.5" stroke="#3a5aa8" stroke-width="1"/>
<line x1="46" y1="181.5" x2="52" y2="181.5" stroke="#505060" stroke-width="1" stroke-dasharray="1 1"/>
<rect x="37.5" y="193.5" width="8" height="8" fill="#ececf0" stroke="#a0a0a8" stroke-width="1"/><line x1="39.5" y1="197.5" x2="43.5" y2="197.5" stroke="#3a5aa8" stroke-width="1"/><line x1="41.5" y1="195.5" x2="41.5" y2="199.5" stroke="#3a5aa8" stroke-width="1"/>
<line x1="46" y1="197.5" x2="52" y2="197.5" stroke="#505060" stroke-width="1" stroke-dasharray="1 1"/>
<rect x="37.5" y="209.5" width="8" height="8" fill="#ececf0" stroke="#a0a0a8" stroke-width="1"/><line x1="39.5" y1="213.5" x2="43.5" y2="213.5" stroke="#3a5aa8" stroke-width="1"/><line x1="41.5" y1="211.5" x2="41.5" y2="215.5" stroke="#3a5aa8" stroke-width="1"/>
<line x1="46" y1="213.5" x2="52" y2="213.5" stroke="#505060" stroke-width="1" stroke-dasharray="1 1"/>
<rect x="37.5" y="225.5" width="8" height="8" fill="#ececf0" stroke="#a0a0a8" stroke-width="1"/><line x1="39.5" y1="229.5" x2="43.5" y2="229.5" stroke="#3a5aa8" stroke-width="1"/><line x1="41.5" y1="227.5" x2="41.5" y2="231.5" stroke="#3a5aa8" stroke-width="1"/>
<line x1="46" y1="229.5" x2="52" y2="229.5" stroke="#505060" stroke-width="1" stroke-dasharray="1 1"/>
<g transform="translate(34.3,142.3) scale(1.0)" fill="none" stroke="#363648" stroke-width="1.3"><path d="M0.7,13.5 V5 L4.6,1 H12.4 V10.2 M0.7,5 H7.4 V13.5 M7.4,5 L12.4,1"/><path d="M8.2,6.2 L11.8,9.8 M8.2,9.8 L11.8,5.6" stroke-width="0.9" stroke="#606070"/></g>
<g fill="none" stroke="#363648" stroke-width="1.2"><polygon points="56,160 68,160 65,164.5 53,164.5"/><polygon points="56,166 68,166 65,170.5 53,170.5"/></g>
<polygon points="55.5,163.8 67,163.8 65.5,166.2 54,166.2" fill="#2a80c8"/>
<g fill="none" stroke="#363648" stroke-width="1.2"><rect x="56.6" y="174.6" width="6" height="12"/><path d="M56.6,176 L62.6,184 M62.6,176 L57.6,182"/></g>
<g fill="none" stroke="#363648" stroke-width="1.2"><rect x="52.6" y="190.6" width="15" height="13"/><path d="M57.5,190.6 V203.6 M62.5,190.6 V203.6 M52.6,195 H67.6 M52.6,199.5 H67.6"/></g>
<g fill="none" stroke="#c8c8cc" stroke-width="1"><path d="M54.5,205 V221 M58.5,205 V221 M62.5,205 V221 M66.5,205 V221 M53,207.5 H68 M53,218.5 H68"/></g>
<rect x="53.5" y="210.5" width="14" height="5" fill="none" stroke="#363648" stroke-width="1.3"/>
<path d="M58.3,210.5 V215.5 M62.8,210.5 V215.5" stroke="#363648" stroke-width="1.1"/>
<g fill="none" stroke="#c0c0c6" stroke-width="1.1"><rect x="56.5" y="223" width="6" height="12"/></g>
<path d="M57,227 L62.5,233.5" stroke="#363648" stroke-width="1.2"/>
<rect x="53.3" y="238" width="5" height="2" fill="#363648"/>
<polyline points="288.9,151.8 292.5,148.2 296.1,151.8" fill="none" stroke="#505058" stroke-width="2"/>
<polyline points="288.9,229.7 292.5,233.3 296.1,229.7" fill="none" stroke="#505058" stroke-width="2.0"/>
<g transform="translate(20,249.5) scale(1.0)" fill="none" stroke="#363648" stroke-width="1.3"><path d="M0.7,13.5 V5 L4.6,1 H12.4 V10.2 M0.7,5 H7.4 V13.5 M7.4,5 L12.4,1"/><path d="M8.2,6.2 L11.8,9.8 M8.2,9.8 L11.8,5.6" stroke-width="0.9" stroke="#606070"/></g>
<rect x="40.0" y="258.8" width="1.2" height="1.2" fill="#4060c0"/><rect x="42.8" y="258.8" width="1.2" height="1.2" fill="#4060c0"/><rect x="45.6" y="258.8" width="1.2" height="1.2" fill="#4060c0"/>
<rect x="81.5" y="258.8" width="1.2" height="1.2" fill="#8040a0"/><rect x="84.3" y="258.8" width="1.2" height="1.2" fill="#8040a0"/><rect x="87.1" y="258.8" width="1.2" height="1.2" fill="#8040a0"/>
<rect x="122.5" y="258.8" width="1.2" height="1.2" fill="#8040a0"/><rect x="125.3" y="258.8" width="1.2" height="1.2" fill="#8040a0"/><rect x="128.1" y="258.8" width="1.2" height="1.2" fill="#8040a0"/>
<rect x="163.5" y="258.8" width="1.2" height="1.2" fill="#8040a0"/><rect x="166.3" y="258.8" width="1.2" height="1.2" fill="#8040a0"/><rect x="169.1" y="258.8" width="1.2" height="1.2" fill="#8040a0"/>
<rect x="204.5" y="258.8" width="1.2" height="1.2" fill="#8040a0"/><rect x="207.3" y="258.8" width="1.2" height="1.2" fill="#8040a0"/><rect x="210.1" y="258.8" width="1.2" height="1.2" fill="#8040a0"/>
<rect x="246.0" y="258.8" width="1.2" height="1.2" fill="#8040a0"/><rect x="248.8" y="258.8" width="1.2" height="1.2" fill="#8040a0"/><rect x="251.6" y="258.8" width="1.2" height="1.2" fill="#8040a0"/>
<rect x="287.0" y="258.8" width="1.2" height="1.2" fill="#8040a0"/><rect x="289.8" y="258.8" width="1.2" height="1.2" fill="#8040a0"/><rect x="292.6" y="258.8" width="1.2" height="1.2" fill="#8040a0"/>
<circle cx="67.8" cy="255.8" r="6.6" fill="none" stroke="#303040" stroke-width="1.1" stroke-dasharray="1.2 1"/>
<circle cx="65.2" cy="256.6" r="3" fill="#a4a4ac"/>
<circle cx="70.2" cy="252.4" r="2.3" fill="#303040"/>
<circle cx="70.2" cy="259" r="2.3" fill="#303040"/>
<rect x="103" y="257.2" width="11" height="2.4" fill="#c02830"/>
<line x1="110.3" y1="250" x2="110.3" y2="256" stroke="#c02830" stroke-width="1.5"/>
<polygon points="108,254.5 112.6,254.5 110.3,257" fill="#c02830"/>
<path d="M101.5,263.5 V260.5 H115 V263.5" fill="none" stroke="#363648" stroke-width="1.2"/>
<rect x="100.8" y="262.3" width="2.2" height="1.6" fill="#363648"/><rect x="113.9" y="262.3" width="2.2" height="1.6" fill="#363648"/>
<rect x="142.3" y="248.2" width="2.6" height="15.8" fill="#363648"/>
<line x1="146" y1="250.5" x2="155" y2="250.5" stroke="#c02830" stroke-width="1.2"/>
<polygon points="145.4,250.5 148,248.7 148,252.3" fill="#c02830"/>
<line x1="146" y1="255.5" x2="155" y2="255.5" stroke="#c02830" stroke-width="1.2"/>
<polygon points="145.4,255.5 148,253.7 148,257.3" fill="#c02830"/>
<line x1="146" y1="260.5" x2="155" y2="260.5" stroke="#c02830" stroke-width="1.2"/>
<polygon points="145.4,260.5 148,258.7 148,262.3" fill="#c02830"/>
<rect x="187.5" y="252" width="8" height="10.5" fill="none" stroke="#363648" stroke-width="1.3"/>
<rect x="189.3" y="248.8" width="4.4" height="3" fill="none" stroke="#363648" stroke-width="1.1"/>
<line x1="191.5" y1="255.5" x2="191.5" y2="261" stroke="#363648" stroke-width="1.3"/>
<line x1="187.5" y1="254" x2="195.5" y2="254" stroke="#363648" stroke-width="1"/>
<rect x="227.8" y="249.3" width="2.6" height="13.5" fill="none" stroke="#363648" stroke-width="1.1"/>
<rect x="231.5" y="251" width="8.8" height="2.6" fill="none" stroke="#363648" stroke-width="1.1"/>
<path d="M231.8,258 L235,255" stroke="#363648" stroke-width="1.4"/>
<path d="M270.3,252.3 L272.3,250.3 H278.8 V262.3 H270.3 Z" fill="none" stroke="#363648" stroke-width="1.3"/>
<path d="M272,254.5 H277 M272,257 H277 M272,259.5 H277" stroke="#363648" stroke-width="1"/>
<rect x="15.5" y="337.3" width="8" height="8.5" fill="none" stroke="#303040" stroke-width="1"/>
<line x1="17.2" y1="342.0" x2="21.8" y2="342.0" stroke="#303040" stroke-width="1.4"/>
<rect x="15.5" y="432.3" width="8" height="8.5" fill="none" stroke="#303040" stroke-width="1"/>
<line x1="17.2" y1="437.0" x2="21.8" y2="437.0" stroke="#303040" stroke-width="1.4"/>
<g transform="translate(317.2,118.9)"><path d="M0.8,15.3 V2.5 Q3.5,0.3 7,1 M7.3,15.3 V1 M15,15.3 V2.5 Q13,0.3 10,1 M0.5,5.5 H15.5 M0.5,9.2 H15.5 M0.5,12.6 H15.5 M4,1 V15 M11.3,1 V15" fill="none" stroke="#8c8c96" stroke-width="1.1"/><path d="M0,9.8 L3.5,7.8 L7.3,5.9 L11.5,7.8 L15.8,9.8 M0,13.8 L3.5,11.8 L7.3,9.9 L11.5,11.8 L15.8,13.8" fill="none" stroke="#d2202e" stroke-width="1.8"/><path d="M15.2,0.8 L8.6,7.8" stroke="#26264a" stroke-width="2.8" stroke-linecap="round"/></g>
<g transform="translate(433,121)"><path d="M0.7,0.7 V13.3 H12.5 Z" fill="none" stroke="#222230" stroke-width="1.3"/><path d="M3,7 V11 H7 Z" fill="none" stroke="#222230" stroke-width="1"/><path d="M0.7,4 H2.5 M0.7,7 H2 M0.7,10 H2.5" stroke="#222230" stroke-width="0.8"/><path d="M8,13.5 L14.5,7" stroke="#404050" stroke-width="2.2"/></g>
<g transform="translate(577.2,121)"><path d="M0.7,0.7 V13.3 H12.5 Z" fill="none" stroke="#222230" stroke-width="1.3"/><path d="M3,7 V11 H7 Z" fill="none" stroke="#222230" stroke-width="1"/><path d="M0.7,4 H2.5 M0.7,7 H2 M0.7,10 H2.5" stroke="#222230" stroke-width="0.8"/><path d="M8,13.5 L14.5,7" stroke="#404050" stroke-width="2.2"/></g>
<path d="M411,123.5 L418.5,131 M418.5,123.5 L411,131" stroke="#ffffff" stroke-width="1.6"/>
<polygon points="1081.5,124.5 1090.5,124.5 1086,129" fill="#606068"/>
<g>
<polygon points="1048.1,143.2 1090.7,166.4 1090.7,219 1044.2,240.7 1002.4,219 1002.4,163.3" fill="#a4a4a4"/>
<polygon points="1046.5,147.5 1085,167 1044.5,183 1006.5,165.5" fill="#7c7c7c"/>
<polygon points="1005,168 1042,185.5 1042,236 1005,216.5" fill="#7c7c7c"/>
<polygon points="1047,185.5 1088,169.5 1088,216.5 1047,236" fill="#7c7c7c"/>
<text x="1046" y="169" font-family="Liberation Sans" font-size="10.5" fill="#b0b0b0" transform="rotate(-28 1046 166)" text-anchor="middle">TOP</text>
<text x="1023" y="206" font-family="Liberation Sans" font-size="11" fill="#b0b0b0" transform="rotate(24 1023 202) scale(1,1)" text-anchor="middle">LEFT</text>
<text x="1067.5" y="210" font-family="Liberation Sans" font-size="11" fill="#b0b0b0" transform="rotate(-27 1067.5 206)" text-anchor="middle">FRONT</text>
</g>
<line x1="371" y1="680" x2="371" y2="650" stroke="#a00818" stroke-width="3"/>
<polygon points="367.2,651 374.8,651 371,646" fill="#a00818"/>
<line x1="371" y1="680" x2="396" y2="667" stroke="#1010d0" stroke-width="3"/>
<polygon points="394,663.5 399.5,665.8 397,670.5" fill="#1010d0"/>
<line x1="371" y1="680" x2="348" y2="666.5" stroke="#20c020" stroke-width="3"/>
<polygon points="350,662.8 345.5,664.8 348,670" fill="#20c020"/>
<text x="370.5" y="641.5" font-family="Liberation Sans" font-size="14.5" fill="#ff2828" text-anchor="middle">Z</text>
<text x="340.8" y="661.8" font-family="Liberation Sans" font-size="14" fill="#30d030" text-anchor="middle">Y</text>
<text x="403.8" y="664" font-family="Liberation Sans" font-size="14" fill="#2020ff" text-anchor="middle">X</text>
<text x="1081" y="731.5" font-family="Liberation Sans" font-size="14" fill="#98989c" text-anchor="middle">S</text>
<path d="M15.3,756.5 L19,760.5 L26,753" fill="none" stroke="#60a030" stroke-width="2.6"/>
<rect x="117.3" y="757.6" width="12" height="2.8" fill="#707078"/>
<rect x="118.2" y="758.5" width="1.2" height="1" fill="#e8e8ee"/>
<rect x="120.5" y="758.5" width="1.2" height="1" fill="#e8e8ee"/>
<rect x="122.8" y="758.5" width="1.2" height="1" fill="#e8e8ee"/>
<rect x="125.1" y="758.5" width="1.2" height="1" fill="#e8e8ee"/>
<rect x="127.4" y="758.5" width="1.2" height="1" fill="#e8e8ee"/>
<line x1="126" y1="751.5" x2="126" y2="755.8" stroke="#a8a8b0" stroke-width="1.5"/>
<polygon points="124,755.3 128,755.3 126,757.6" fill="#909098"/>
<path d="M116,764 V761.6 H129.6 V764" fill="none" stroke="#606068" stroke-width="1"/>
<rect x="115.2" y="762.6" width="2" height="1.8" fill="#606068"/><rect x="128.6" y="762.6" width="2" height="1.8" fill="#606068"/>
<rect x="144.3" y="750" width="6.8" height="6.4" fill="#2a2a48"/>
<rect x="145.1" y="750.8" width="1.2" height="1.1" fill="#e8e8f0"/>
<rect x="147.2" y="750.8" width="1.2" height="1.1" fill="#e8e8f0"/>
<rect x="149.3" y="750.8" width="1.2" height="1.1" fill="#e8e8f0"/>
<rect x="145.1" y="752.8" width="1.2" height="1.1" fill="#e8e8f0"/>
<rect x="147.2" y="752.8" width="1.2" height="1.1" fill="#e8e8f0"/>
<rect x="149.3" y="752.8" width="1.2" height="1.1" fill="#e8e8f0"/>
<rect x="145.1" y="754.8" width="1.2" height="1.1" fill="#e8e8f0"/>
<rect x="147.2" y="754.8" width="1.2" height="1.1" fill="#e8e8f0"/>
<rect x="146.6" y="757.8" width="12.4" height="3" fill="#c41e30"/>
<rect x="147.6" y="758.9" width="1.1" height="1" fill="#f4d0d4"/>
<rect x="149.9" y="758.9" width="1.1" height="1" fill="#f4d0d4"/>
<rect x="152.3" y="758.9" width="1.1" height="1" fill="#f4d0d4"/>
<rect x="154.7" y="758.9" width="1.1" height="1" fill="#f4d0d4"/>
<rect x="157.0" y="758.9" width="1.1" height="1" fill="#f4d0d4"/>
<line x1="154" y1="751.5" x2="154" y2="755.8" stroke="#d06070" stroke-width="1.5"/>
<polygon points="151.9,755.3 156.1,755.3 154,757.8" fill="#c41e30"/>
<path d="M145.5,764 V761.8 H159 V764" fill="none" stroke="#202030" stroke-width="1.1"/>
<rect x="144.4" y="762.8" width="2.2" height="1.8" fill="#202030"/><rect x="158" y="762.8" width="2.2" height="1.8" fill="#202030"/>
<rect x="173.5" y="753.5" width="11" height="7" fill="none" stroke="#707078" stroke-width="1.2"/>
<path d="M173.5,753.5 L179,757.5 L184.5,753.5 M173.5,760.5 L177.5,757 M184.5,760.5 L180.5,757" fill="none" stroke="#707078" stroke-width="1"/>
<circle cx="333" cy="757" r="6" fill="#c21e2e"/>
<path d="M330.8,754.8 L335.2,759.2 M335.2,754.8 L330.8,759.2" stroke="#ffffff" stroke-width="1.4"/>
<circle cx="365.6" cy="757" r="6" fill="#74aa3c"/>
<path d="M362.6,757 L364.8,759.3 L368.8,755" fill="none" stroke="#ffffff" stroke-width="1.6"/>
<circle cx="401.9" cy="757" r="6" fill="#74aa3c"/>
<path d="M398.9,757 L401.09999999999997,759.3 L405.09999999999997,755" fill="none" stroke="#ffffff" stroke-width="1.6"/>
<circle cx="435" cy="757" r="6" fill="#74aa3c"/>
<path d="M432,757 L434.2,759.3 L438.2,755" fill="none" stroke="#ffffff" stroke-width="1.6"/>
<circle cx="468.1" cy="757" r="6" fill="#c21e2e"/>
<path d="M465.90000000000003,754.8 L470.3,759.2 M470.3,754.8 L465.90000000000003,759.2" stroke="#ffffff" stroke-width="1.4"/>
<circle cx="500.7" cy="757" r="6" fill="#74aa3c"/>
<path d="M497.7,757 L499.9,759.3 L503.9,755" fill="none" stroke="#ffffff" stroke-width="1.6"/>
<circle cx="533.8" cy="757" r="6" fill="#74aa3c"/>
<path d="M530.8,757 L533.0,759.3 L537.0,755" fill="none" stroke="#ffffff" stroke-width="1.6"/>
<circle cx="566.9" cy="757" r="6" fill="#c21e2e"/>
<path d="M564.6999999999999,754.8 L569.1,759.2 M569.1,754.8 L564.6999999999999,759.2" stroke="#ffffff" stroke-width="1.4"/>
<g transform="translate(828,750)"><path d="M0.7,0.7 V13.3 H12.5 Z" fill="none" stroke="#222230" stroke-width="1.3"/><path d="M3,7 V11 H7 Z" fill="none" stroke="#222230" stroke-width="1"/><path d="M0.7,4 H2.5 M0.7,7 H2 M0.7,10 H2.5" stroke="#222230" stroke-width="0.8"/><path d="M8,13.5 L14.5,7" stroke="#404050" stroke-width="2.2"/></g>
<path d="M857,751 L863,757 L869,751 M863,757 V763.5" fill="none" stroke="#303040" stroke-width="1.6"/>
<circle cx="857" cy="751" r="1.5" fill="#303040"/><circle cx="869" cy="751" r="1.5" fill="#303040"/><circle cx="863" cy="763.5" r="1.5" fill="#303040"/>
<rect x="885.5" y="751.5" width="11.5" height="11.5" fill="none" stroke="#303040" stroke-width="1.3"/>
<path d="M888.5,761 V756.5 M891.2,761 V754 M894,761 V757.5" stroke="#303040" stroke-width="1.6"/>
<path d="M911.5,751.5 H912.5 M911.5,754 H912.5 M911.5,756.5 H912.5 M914,751.5 H921 M914,754 H921 M914,756.5 H921" stroke="#303040" stroke-width="1.2"/>
<circle cx="923.5" cy="761" r="3.3" fill="#60a840"/>
<rect x="940" y="756" width="14.5" height="8" fill="#303040"/>
<path d="M940,758.7 H954.5 M940,761.3 H954.5 M943,756 V764 M946.5,756 V764 M950,756 V764" stroke="#e8e8ee" stroke-width="0.8"/>
<path d="M946,757 L955.5,748" stroke="#303040" stroke-width="2.4"/>
<g transform="translate(967.2,748.8)"><path d="M0.8,15.3 V2.5 Q3.5,0.3 7,1 M7.3,15.3 V1 M15,15.3 V2.5 Q13,0.3 10,1 M0.5,5.5 H15.5 M0.5,9.2 H15.5 M0.5,12.6 H15.5 M4,1 V15 M11.3,1 V15" fill="none" stroke="#8c8c96" stroke-width="1.1"/><path d="M0,9.8 L3.5,7.8 L7.3,5.9 L11.5,7.8 L15.8,9.8 M0,13.8 L3.5,11.8 L7.3,9.9 L11.5,11.8 L15.8,13.8" fill="none" stroke="#d2202e" stroke-width="1.8"/><path d="M15.2,0.8 L8.6,7.8" stroke="#26264a" stroke-width="2.8" stroke-linecap="round"/></g>
</svg>
<div class=t style='left:21.1px;top:7.7px;color:#ffffff;font-size:11px;font-weight:normal;transform:scaleX(1.003)'>FILE</div>
<div class=t style='left:71.8px;top:7.7px;color:#262640;font-size:11px;font-weight:normal;transform:scaleX(0.909)'>HOME</div>
<div class=t style='left:124.4px;top:7.7px;color:#262640;font-size:11px;font-weight:normal;transform:scaleX(0.942)'>BIM INTEGRATION</div>
<div class=t style='left:238.6px;top:7.7px;color:#262640;font-size:11px;font-weight:normal;transform:scaleX(0.877)'>MODEL</div>
<div class=t style='left:296.3px;top:7.7px;color:#262640;font-size:11px;font-weight:normal;transform:scaleX(0.966)'>EDIT</div>
<div class=t style='left:343.4px;top:7.7px;color:#262640;font-size:11px;font-weight:normal;transform:scaleX(0.941)'>LOAD</div>
<div class=t style='left:395.1px;top:7.7px;color:#262640;font-size:11px;font-weight:normal;transform:scaleX(0.891)'>ANALYSE</div>
<div class=t style='left:462.2px;top:7.7px;color:#262640;font-size:11px;font-weight:normal;transform:scaleX(0.908)'>DESIGN</div>
<div class=t style='left:523.5px;top:7.7px;color:#262640;font-size:11px;font-weight:normal;transform:scaleX(0.893)'>SLAB DEFLECTION</div>
<div class=t style='left:636.7px;top:7.7px;color:#262640;font-size:11px;font-weight:normal;transform:scaleX(0.927)'>FOUNDATIONS</div>
<div class=t style='left:733.6px;top:7.7px;color:#262640;font-size:11px;font-weight:normal;transform:scaleX(0.894)'>REPORT</div>
<div class=t style='left:797.7px;top:7.7px;color:#262640;font-size:11px;font-weight:normal;transform:scaleX(0.952)'>DRAW</div>
<div class=t style='left:852.1px;top:7.7px;color:#262640;font-size:11px;font-weight:normal;transform:scaleX(0.939)'>WINDOWS</div>
<div class=t style='left:926.5px;top:7.7px;color:#262640;font-size:11px;font-weight:normal;transform:scaleX(0.925)'>FOOTFALL ANALYSIS</div>
<div class=t style='left:18.8px;top:66.2px;color:#262640;font-size:11px;font-weight:normal;transform:scaleX(1.001)'>Settings</div>
<div class=t style='left:81.7px;top:38.7px;color:#262640;font-size:11px;font-weight:normal;transform:scaleX(0.941)'>Design Guide</div>
<div class=t style='left:151.0px;top:39.0px;color:#202030;font-size:11px;font-weight:normal;transform:scaleX(0.951)'>AISC DG11</div>
<div class=t style='left:81.7px;top:67.7px;color:#262640;font-size:11px;font-weight:normal;transform:scaleX(0.954)'>Model</div>
<div class=t style='left:250.1px;top:31.7px;color:#262640;font-size:11px;font-weight:normal;transform:scaleX(0.981)'>New</div>
<div class=t style='left:250.1px;top:53.7px;color:#a6a6ae;font-size:11px;font-weight:normal;transform:scaleX(0.991)'>Edit</div>
<div class=t style='left:250.1px;top:75.7px;color:#a6a6ae;font-size:11px;font-weight:normal;transform:scaleX(0.975)'>Delete</div>
<div class=t style='left:18.8px;top:100.7px;color:#262640;font-size:11px;font-weight:normal;transform:scaleX(1.001)'>Settings</div>
<div class=t style='left:123.7px;top:100.7px;color:#262640;font-size:11px;font-weight:normal;transform:scaleX(0.972)'>Footfall Analysis Models</div>
<div class=t style='left:297.7px;top:32.0px;color:#262640;font-size:11px;font-weight:normal;transform:scaleX(0.963)'>Footfall Mass Combinations</div>
<div class=t style='left:297.7px;top:53.7px;color:#a6a6ae;font-size:11px;font-weight:normal;transform:scaleX(1.008)'>Analyse Current</div>
<div class=t style='left:297.7px;top:75.7px;color:#a6a6ae;font-size:11px;font-weight:normal;transform:scaleX(0.987)'>Analyse All</div>
<div class=t style='left:327.1px;top:100.7px;color:#262640;font-size:11px;font-weight:normal;transform:scaleX(0.979)'>Modal Analysis</div>
<div class=t style='left:444.4px;top:32.7px;color:#a6a6ae;font-size:11px;font-weight:normal;transform:scaleX(0.956)'>Mode Shape View</div>
<div class=t style='left:444.4px;top:54.7px;color:#a6a6ae;font-size:11px;font-weight:normal;transform:scaleX(0.988)'>Mode</div>
<div class=t style='left:444.4px;top:75.9px;color:#262640;font-size:11px;font-weight:normal;transform:scaleX(0.998)'>Deflections</div>
<div class=t style='left:460.0px;top:100.7px;color:#262640;font-size:11px;font-weight:normal;transform:scaleX(0.963)'>Analysis Results</div>
<div class=t style='left:568.7px;top:31.9px;color:#a6a6ae;font-size:11px;font-weight:normal;transform:scaleX(0.972)'>Envelope</div>
<div class=t style='left:568.7px;top:53.8px;color:#a6a6ae;font-size:11px;font-weight:normal;transform:scaleX(0.984)'>Response Type</div>
<div class=t style='left:667.5px;top:53.8px;color:#a6a6ae;font-size:11px;font-weight:normal;transform:scaleX(0.961)'>Sinusoidal Peak Acceleration</div>
<div class=t style='left:568.7px;top:75.7px;color:#262640;font-size:11px;font-weight:normal;transform:scaleX(0.965)'>Pass/Fail Status</div>
<div class=t style='left:618.4px;top:100.7px;color:#262640;font-size:11px;font-weight:normal;transform:scaleX(0.983)'>Footfall Assessment Results</div>
<div class=t style='left:819.6px;top:65.7px;color:#a6a6ae;font-size:11px;font-weight:normal;transform:scaleX(1.009)'>Tabular</div>
<div class=t style='left:819.6px;top:78.7px;color:#a6a6ae;font-size:11px;font-weight:normal;transform:scaleX(0.989)'>Results</div>
<div class=t style='left:825.1px;top:100.7px;color:#262640;font-size:11px;font-weight:normal;transform:scaleX(1.041)'>Data</div>
<div class=t style='left:16.6px;top:121.9px;color:#ffffff;font-size:11px;font-weight:normal;transform:scaleX(1.033)'>Structure</div>
<div class=t style='left:53.3px;top:143.7px;color:#ffffff;font-size:11px;font-weight:normal;transform:scaleX(1.033)'>Structure</div>
<div class=t style='left:72.8px;top:159.7px;color:#262640;font-size:11px;font-weight:normal;transform:scaleX(0.966)'>Levels</div>
<div class=t style='left:72.8px;top:175.7px;color:#262640;font-size:11px;font-weight:normal;transform:scaleX(0.960)'>Frames</div>
<div class=t style='left:72.8px;top:191.7px;color:#262640;font-size:11px;font-weight:normal;transform:scaleX(0.978)'>Architectural Grids</div>
<div class=t style='left:72.8px;top:207.7px;color:#262640;font-size:11px;font-weight:normal;transform:scaleX(0.945)'>Sub Models</div>
<div class=t style='left:72.8px;top:223.7px;color:#262640;font-size:11px;font-weight:normal;transform:scaleX(0.989)'>Sub Structures</div>
<div class=t style='left:16.6px;top:280.9px;color:#262640;font-size:11px;font-weight:normal;transform:scaleX(0.995)'>Properties</div>
<div class=t style='left:20.7px;top:308.7px;color:#262640;font-size:11px;font-weight:normal;transform:scaleX(0.972)'>Models: 1 items</div>
<div class=t style='left:207.4px;top:308.7px;color:#a6a6ae;font-size:11px;font-weight:normal;transform:scaleX(0.981)'>Save...</div>
<div class=t style='left:253.2px;top:308.7px;color:#a6a6ae;font-size:11px;font-weight:normal;transform:scaleX(1.140)'>Apply...</div>
<div class=t style='left:31.3px;top:336.5px;color:#30304a;font-size:11px;font-weight:bold;transform:scaleX(1.113)'>General</div>
<div class=t style='left:31.3px;top:431.5px;color:#30304a;font-size:11px;font-weight:bold;transform:scaleX(1.073)'>Meshing</div>
<div class=t style='left:31.1px;top:355.2px;color:#262640;font-size:11px;font-weight:normal;transform:scaleX(0.968)'>Building Direction Rotation</div>
<div class=t style='left:169.9px;top:354.7px;color:#262640;font-size:11px;font-weight:normal;transform:scaleX(1.059)'>0.0000°</div>
<div class=t style='left:31.1px;top:374.2px;color:#9090a0;font-size:11px;font-weight:normal;transform:scaleX(0.968)'>Building Direction Rotation</div>
<div class=t style='left:169.9px;top:373.7px;color:#9090a0;font-size:11px;font-weight:normal;transform:scaleX(1.059)'>0.0000°</div>
<div class=t style='left:31.1px;top:393.2px;color:#262640;font-size:11px;font-weight:normal;transform:scaleX(0.976)'>Show Building Direction ...</div>
<div class=t style='left:31.1px;top:412.2px;color:#262640;font-size:11px;font-weight:normal;transform:scaleX(0.948)'>Building Direction Labels</div>
<div class=t style='left:169.9px;top:411.7px;color:#262640;font-size:11px;font-weight:normal;transform:scaleX(1.021)'>Dir 1/2</div>
<div class=t style='left:31.1px;top:450.2px;color:#262640;font-size:11px;font-weight:normal;transform:scaleX(0.921)'>Slab Mesh Size</div>
<div class=t style='left:169.9px;top:449.7px;color:#262640;font-size:11px;font-weight:normal;transform:scaleX(1.138)'>3’ 6”</div>
<div class=t style='left:31.1px;top:469.2px;color:#262640;font-size:11px;font-weight:normal;transform:scaleX(0.973)'>Slab Uniformity Factor</div>
<div class=t style='left:169.9px;top:468.7px;color:#262640;font-size:11px;font-weight:normal;transform:scaleX(1.080)'>50.00%</div>
<div class=t style='left:31.1px;top:488.2px;color:#262640;font-size:11px;font-weight:normal;transform:scaleX(0.956)'>Slab Mesh Type</div>
<div class=t style='left:169.9px;top:487.7px;color:#262640;font-size:11px;font-weight:normal;transform:scaleX(0.987)'>Triangular</div>
<div class=t style='left:31.1px;top:507.2px;color:#262640;font-size:11px;font-weight:normal;transform:scaleX(0.918)'>Semi-Rigid Mesh Size</div>
<div class=t style='left:169.9px;top:506.7px;color:#262640;font-size:11px;font-weight:normal;transform:scaleX(1.138)'>8’ 0”</div>
<div class=t style='left:31.1px;top:526.2px;color:#262640;font-size:11px;font-weight:normal;transform:scaleX(0.976)'>Semi-Rigid Uniformity Fa...</div>
<div class=t style='left:169.9px;top:525.7px;color:#262640;font-size:11px;font-weight:normal;transform:scaleX(1.061)'>100.00%</div>
<div class=t style='left:31.1px;top:545.2px;color:#262640;font-size:11px;font-weight:normal;transform:scaleX(0.944)'>Semi-Rigid Mesh Type</div>
<div class=t style='left:169.9px;top:544.7px;color:#262640;font-size:11px;font-weight:normal;transform:scaleX(0.970)'>QuadDominant</div>
<div class=t style='left:31.1px;top:564.2px;color:#262640;font-size:11px;font-weight:normal;transform:scaleX(0.948)'>Wall Mesh Horizontal Size</div>
<div class=t style='left:169.9px;top:563.7px;color:#262640;font-size:11px;font-weight:normal;transform:scaleX(1.138)'>3’ 6”</div>
<div class=t style='left:31.1px;top:583.2px;color:#262640;font-size:11px;font-weight:normal;transform:scaleX(0.944)'>Wall Mesh Vertical Size</div>
<div class=t style='left:169.9px;top:582.7px;color:#262640;font-size:11px;font-weight:normal;transform:scaleX(1.138)'>3’ 6”</div>
<div class=t style='left:31.1px;top:602.2px;color:#262640;font-size:11px;font-weight:normal;transform:scaleX(0.969)'>Wall Mesh Type</div>
<div class=t style='left:169.9px;top:601.7px;color:#262640;font-size:11px;font-weight:normal;transform:scaleX(0.970)'>QuadDominant</div>
<div class=t style='left:14.3px;top:717.5px;color:#30304a;font-size:11px;font-weight:bold;transform:scaleX(1.111)'>General</div>
<div class=t style='left:334.9px;top:122.0px;color:#262640;font-size:11px;font-weight:normal;transform:scaleX(0.996)'>Structure 3D</div>
<div class=t style='left:449.6px;top:122.2px;color:#262640;font-size:11px;font-weight:normal;transform:scaleX(0.964)'>St. Base (Base) 2D</div>
<div class=t style='left:593.9px;top:122.2px;color:#262640;font-size:11px;font-weight:normal;transform:scaleX(1.004)'>St. 1 (1) 2D</div>
<div class=t style='left:32.7px;top:751.2px;color:#262640;font-size:11px;font-weight:normal;transform:scaleX(0.954)'>Show Process</div>
<div class=t style='left:593.1px;top:751.2px;color:#262640;font-size:11px;font-weight:normal;transform:scaleX(0.963)'>US Customary</div>
<div class=t style='left:676.1px;top:751.2px;color:#262640;font-size:11px;font-weight:normal;transform:scaleX(0.998)'>United States (ACI/AISC)</div>
<div class=t style='left:996.6px;top:751.2px;color:#262640;font-size:11px;font-weight:normal;transform:scaleX(0.918)'>ABS</div>
<div class=t style='left:1027.6px;top:751.2px;color:#1a6fd0;font-size:11px;font-weight:normal;transform:scaleX(0.888)'>REL</div>
<div class=t style='left:1057.6px;top:751.2px;color:#262640;font-size:11px;font-weight:normal;transform:scaleX(0.895)'>POL</div>
<div class=t style='left:1092.6px;top:751.2px;color:#606070;font-size:11px;font-weight:normal;transform:scaleX(0.955)'>3</div>
</body></html>
